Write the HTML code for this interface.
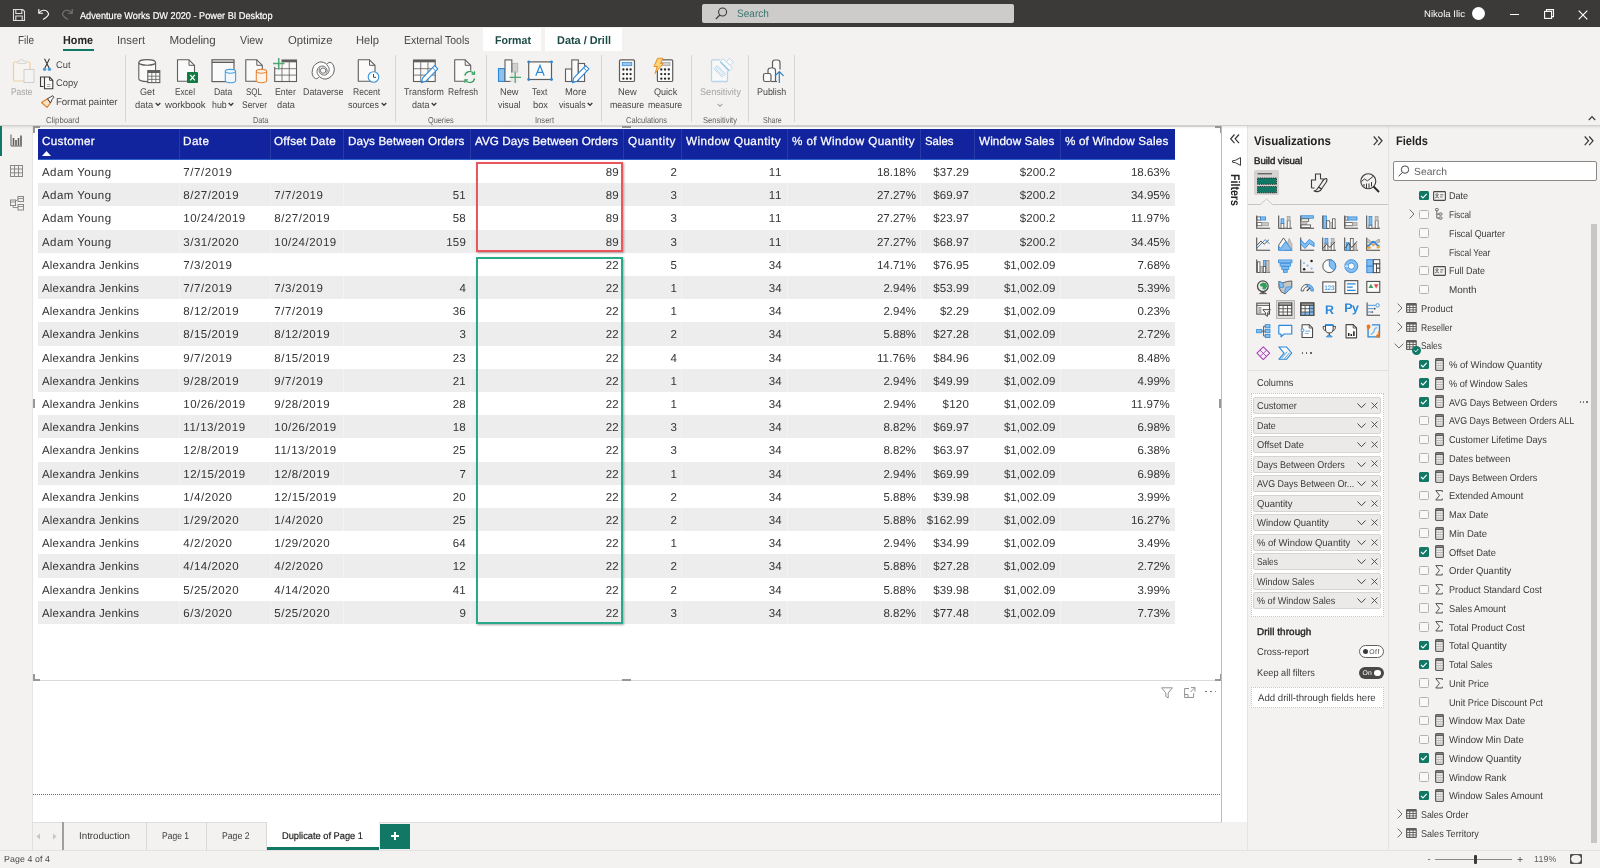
<!DOCTYPE html>
<html lang="en"><head><meta charset="utf-8"><title>Adventure Works DW 2020 - Power BI Desktop</title>
<style>
html,body{margin:0;padding:0;}
body{width:1600px;height:868px;overflow:hidden;position:relative;background:#f3f2f1;font-family:"Liberation Sans",sans-serif;text-rendering:geometricPrecision;}
.b{position:absolute;box-sizing:border-box;display:block;}
.t{position:absolute;white-space:pre;display:block;transform-origin:0 50%;}
svg{overflow:visible;}
</style></head><body>
<div id="root" style="position:absolute;left:0;top:0;width:1600px;height:868px;will-change:transform;">

<!-- p_chrome -->
<div class="b" style="left:0px;top:0px;width:1600px;height:27px;background:#3b3a39;"></div>
<svg class="b" style="left:13px;top:8.5px;" width="12" height="12" viewBox="0 0 12 12"><path d="M0.5 0.5h9.2l1.8 1.8v9.2h-11z M2.8 0.5v4h6v-4 M2.8 11.5v-4.5h6.4v4.5" fill="none" stroke="#e1dfdd" stroke-width="1.1"/></svg>
<svg class="b" style="left:38px;top:8px;" width="12" height="12" viewBox="0 0 12 12"><path d="M0.8 1v4.2h4.2 M1 5c2-3.2 6.5-3.6 8.6-1.2c2 2.4 0.6 5.2-4.6 7.6" fill="none" stroke="#fff" stroke-width="1.1"/></svg>
<svg class="b" style="left:61px;top:8px;" width="12" height="12" viewBox="0 0 12 12"><path d="M11.2 1v4.2h-4.2 M11 5c-2-3.2-6.5-3.6-8.600-1.200c-2 2.4-0.600 5.200 4.600 7.600" fill="none" stroke="#7a7876" stroke-width="1.1"/></svg>
<span class="t" style="left:80.00px;top:11px;font-size:9.9px;line-height:11px;color:#fff;transform:scaleX(0.9288);-webkit-text-stroke:0.2px #fff;">Adventure Works DW 2020 - Power BI Desktop</span>
<div class="b" style="left:702px;top:4px;width:312px;height:19px;background:#cdcccb;border-radius:2px;"></div>
<svg class="b" style="left:715px;top:7px;" width="13" height="13" viewBox="0 0 13 13"><circle cx="7.6" cy="5" r="4" fill="none" stroke="#3b3a39" stroke-width="1.1"/><path d="M4.8 8 L0.8 12" stroke="#3b3a39" stroke-width="1.1"/></svg>
<span class="t" style="left:737.00px;top:8px;font-size:10.6px;line-height:12px;color:#3a766c;transform:scaleX(0.9527);">Search</span>
<span class="t" style="left:1424.00px;top:9px;font-size:9.5px;line-height:11px;color:#fff;letter-spacing:0.032px;">Nikola Ilic</span>
<div class="b" style="left:1472px;top:6.5px;width:13px;height:13px;background:#fff;border-radius:50%;"></div>
<div class="b" style="left:1510px;top:14px;width:9px;height:1.2px;background:#fff;"></div>
<svg class="b" style="left:1544px;top:9px;" width="10" height="10" viewBox="0 0 10 10"><rect x="0.6" y="2.4" width="7" height="7" fill="none" stroke="#fff" stroke-width="1.1"/><path d="M2.5 2.4v-1.8h7v7h-1.9" fill="none" stroke="#fff" stroke-width="1.1"/></svg>
<svg class="b" style="left:1578px;top:9.5px;" width="10" height="10" viewBox="0 0 10 10"><path d="M0.7 0.7l8.6 8.6M9.3 0.7l-8.6 8.6" stroke="#fff" stroke-width="1.2"/></svg>
<span class="t" style="left:18.00px;top:35px;font-size:11.6px;line-height:12px;color:#4a4846;transform:scaleX(0.8560);">File</span>
<span class="t" style="left:117.00px;top:35px;font-size:11.6px;line-height:12px;color:#4a4846;transform:scaleX(0.9651);">Insert</span>
<span class="t" style="left:169.50px;top:35px;font-size:11.6px;line-height:12px;color:#4a4846;letter-spacing:-0.135px;">Modeling</span>
<span class="t" style="left:240.00px;top:35px;font-size:11.6px;line-height:12px;color:#4a4846;transform:scaleX(0.9224);">View</span>
<span class="t" style="left:287.50px;top:35px;font-size:11.6px;line-height:12px;color:#4a4846;transform:scaleX(0.9723);">Optimize</span>
<span class="t" style="left:356.00px;top:35px;font-size:11.6px;line-height:12px;color:#4a4846;transform:scaleX(0.9640);">Help</span>
<span class="t" style="left:404.00px;top:35px;font-size:11.6px;line-height:12px;color:#4a4846;transform:scaleX(0.9016);">External Tools</span>
<span class="t" style="left:63.30px;top:35px;font-size:11.6px;line-height:12px;color:#252423;font-weight:bold;transform:scaleX(0.9308);">Home</span>
<div class="b" style="left:63px;top:49px;width:30.5px;height:2px;background:#117865;"></div>
<div class="b" style="left:482.5px;top:27.5px;width:58.5px;height:23px;background:#fff;"></div>
<div class="b" style="left:544.5px;top:27.5px;width:77.5px;height:23px;background:#fff;"></div>
<span class="t" style="left:494.50px;top:35px;font-size:11.2px;line-height:12px;color:#1b4a45;font-weight:bold;transform:scaleX(0.9484);">Format</span>
<span class="t" style="left:556.50px;top:35px;font-size:11.2px;line-height:12px;color:#1b4a45;font-weight:bold;transform:scaleX(0.9749);">Data / Drill</span>
<div class="b" style="left:125px;top:55px;width:1px;height:67px;background:#d8d6d4;"></div>
<div class="b" style="left:395px;top:55px;width:1px;height:67px;background:#d8d6d4;"></div>
<div class="b" style="left:485.8px;top:55px;width:1px;height:67px;background:#d8d6d4;"></div>
<div class="b" style="left:601px;top:55px;width:1px;height:67px;background:#d8d6d4;"></div>
<div class="b" style="left:690.5px;top:55px;width:1px;height:67px;background:#d8d6d4;"></div>
<div class="b" style="left:748.3px;top:55px;width:1px;height:67px;background:#d8d6d4;"></div>
<div class="b" style="left:794px;top:55px;width:1px;height:67px;background:#d8d6d4;"></div>
<div class="b" style="left:0px;top:125px;width:1600px;height:1px;background:#d2d0ce;"></div>
<svg class="b" style="left:1588px;top:115px;" width="8" height="6" viewBox="0 0 8 6"><path d="M0.8 5l3.2-3.4l3.2 3.400" fill="none" stroke="#3b3a39" stroke-width="1.2"/></svg>
<span class="t" style="left:45.85px;top:115px;font-size:8.6px;line-height:10px;color:#605e5c;transform:scaleX(0.9046);">Clipboard</span>
<span class="t" style="left:252.80px;top:115px;font-size:8.6px;line-height:10px;color:#605e5c;transform:scaleX(0.8477);">Data</span>
<span class="t" style="left:428.25px;top:115px;font-size:8.6px;line-height:10px;color:#605e5c;transform:scaleX(0.8534);">Queries</span>
<span class="t" style="left:534.80px;top:115px;font-size:8.6px;line-height:10px;color:#605e5c;transform:scaleX(0.8834);">Insert</span>
<span class="t" style="left:626.00px;top:115px;font-size:8.6px;line-height:10px;color:#605e5c;transform:scaleX(0.8752);">Calculations</span>
<span class="t" style="left:703.00px;top:115px;font-size:8.6px;line-height:10px;color:#605e5c;transform:scaleX(0.8782);">Sensitivity</span>
<span class="t" style="left:762.75px;top:115px;font-size:8.6px;line-height:10px;color:#605e5c;transform:scaleX(0.8148);">Share</span>
<span class="t" style="left:56.00px;top:60px;font-size:9.7px;line-height:11px;color:#4a4846;transform:scaleX(0.9606);">Cut</span>
<span class="t" style="left:56.00px;top:78px;font-size:9.7px;line-height:11px;color:#4a4846;transform:scaleX(0.9715);">Copy</span>
<span class="t" style="left:56.00px;top:97px;font-size:9.7px;line-height:11px;color:#4a4846;letter-spacing:-0.113px;">Format painter</span>
<span class="t" style="left:11.20px;top:87px;font-size:9.7px;line-height:11px;color:#a6a4a2;transform:scaleX(0.8668);">Paste</span>
<span class="t" style="left:139.95px;top:87px;font-size:9.7px;line-height:11px;color:#4a4846;transform:scaleX(0.9402);">Get</span>
<span class="t" style="left:134.90px;top:100px;font-size:9.7px;line-height:11px;color:#4a4846;transform:scaleX(0.9640);">data</span>
<svg class="b" style="left:154.5px;top:102.3px;" width="6" height="5" viewBox="0 0 6 5"><path d="M0.700 1l2.300 2.300l2.300-2.300" fill="none" stroke="#3b3a39" stroke-width="1.300"/></svg>
<span class="t" style="left:175.30px;top:87px;font-size:9.7px;line-height:11px;color:#4a4846;transform:scaleX(0.8432);">Excel</span>
<span class="t" style="left:165.05px;top:100px;font-size:9.7px;line-height:11px;color:#4a4846;letter-spacing:-0.127px;">workbook</span>
<span class="t" style="left:213.80px;top:87px;font-size:9.7px;line-height:11px;color:#4a4846;transform:scaleX(0.8980);">Data</span>
<span class="t" style="left:212.35px;top:100px;font-size:9.7px;line-height:11px;color:#4a4846;transform:scaleX(0.9083);">hub</span>
<svg class="b" style="left:228.45px;top:102.3px;" width="6" height="5" viewBox="0 0 6 5"><path d="M0.700 1l2.300 2.300l2.300-2.300" fill="none" stroke="#3b3a39" stroke-width="1.300"/></svg>
<span class="t" style="left:246.20px;top:87px;font-size:9.7px;line-height:11px;color:#4a4846;transform:scaleX(0.8243);">SQL</span>
<span class="t" style="left:241.70px;top:100px;font-size:9.7px;line-height:11px;color:#4a4846;transform:scaleX(0.8750);">Server</span>
<span class="t" style="left:275.20px;top:87px;font-size:9.7px;line-height:11px;color:#4a4846;transform:scaleX(0.8971);">Enter</span>
<span class="t" style="left:276.60px;top:100px;font-size:9.7px;line-height:11px;color:#4a4846;transform:scaleX(0.9534);">data</span>
<span class="t" style="left:302.95px;top:87px;font-size:9.7px;line-height:11px;color:#4a4846;transform:scaleX(0.9161);">Dataverse</span>
<span class="t" style="left:353.45px;top:87px;font-size:9.7px;line-height:11px;color:#4a4846;transform:scaleX(0.8882);">Recent</span>
<span class="t" style="left:348.30px;top:100px;font-size:9.7px;line-height:11px;color:#4a4846;transform:scaleX(0.9127);">sources</span>
<svg class="b" style="left:380.7px;top:102.3px;" width="6" height="5" viewBox="0 0 6 5"><path d="M0.700 1l2.300 2.300l2.300-2.300" fill="none" stroke="#3b3a39" stroke-width="1.300"/></svg>
<span class="t" style="left:404.00px;top:87px;font-size:9.7px;line-height:11px;color:#4a4846;transform:scaleX(0.9125);">Transform</span>
<span class="t" style="left:411.95px;top:100px;font-size:9.7px;line-height:11px;color:#4a4846;transform:scaleX(0.9269);">data</span>
<svg class="b" style="left:430.85px;top:102.3px;" width="6" height="5" viewBox="0 0 6 5"><path d="M0.700 1l2.300 2.300l2.300-2.300" fill="none" stroke="#3b3a39" stroke-width="1.300"/></svg>
<span class="t" style="left:448.00px;top:87px;font-size:9.7px;line-height:11px;color:#4a4846;transform:scaleX(0.8833);">Refresh</span>
<span class="t" style="left:499.50px;top:87px;font-size:9.7px;line-height:11px;color:#4a4846;transform:scaleX(0.9533);">New</span>
<span class="t" style="left:497.50px;top:100px;font-size:9.7px;line-height:11px;color:#4a4846;transform:scaleX(0.9073);">visual</span>
<span class="t" style="left:532.45px;top:87px;font-size:9.7px;line-height:11px;color:#4a4846;transform:scaleX(0.8601);">Text</span>
<span class="t" style="left:532.60px;top:100px;font-size:9.7px;line-height:11px;color:#4a4846;transform:scaleX(0.9591);">box</span>
<span class="t" style="left:564.80px;top:87px;font-size:9.7px;line-height:11px;color:#4a4846;transform:scaleX(0.9683);">More</span>
<span class="t" style="left:558.85px;top:100px;font-size:9.7px;line-height:11px;color:#4a4846;transform:scaleX(0.9005);">visuals</span>
<svg class="b" style="left:586.95px;top:102.3px;" width="6" height="5" viewBox="0 0 6 5"><path d="M0.700 1l2.300 2.300l2.300-2.300" fill="none" stroke="#3b3a39" stroke-width="1.300"/></svg>
<span class="t" style="left:618.15px;top:87px;font-size:9.7px;line-height:11px;color:#4a4846;transform:scaleX(0.9637);">New</span>
<span class="t" style="left:610.40px;top:100px;font-size:9.7px;line-height:11px;color:#4a4846;transform:scaleX(0.9062);">measure</span>
<span class="t" style="left:654.00px;top:87px;font-size:9.7px;line-height:11px;color:#4a4846;transform:scaleX(0.9357);">Quick</span>
<span class="t" style="left:648.45px;top:100px;font-size:9.7px;line-height:11px;color:#4a4846;transform:scaleX(0.9088);">measure</span>
<span class="t" style="left:757.45px;top:87px;font-size:9.7px;line-height:11px;color:#4a4846;transform:scaleX(0.9209);">Publish</span>
<span class="t" style="left:699.50px;top:87px;font-size:9.7px;line-height:11px;color:#a6a4a2;transform:scaleX(0.9390);">Sensitivity</span>
<svg class="b" style="left:717.2px;top:102.6px;" width="6" height="5" viewBox="0 0 6 5"><path d="M0.700 1l2.300 2.300l2.300-2.300" fill="none" stroke="#a6a4a2" stroke-width="1.100"/></svg>
<!-- p_table -->
<div class="b" style="left:32px;top:126px;width:1190px;height:696px;background:#fff;"></div>
<div class="b" style="left:32px;top:126px;width:1px;height:696px;background:#e6e5e4;"></div>
<div class="b" style="left:33px;top:126px;width:1188px;height:1px;background:#dcdbda;"></div>
<div class="b" style="left:33px;top:680px;width:1188px;height:1px;background:#dcdbda;"></div>
<div class="b" style="left:38px;top:129.3px;width:1136.6px;height:30.8px;background:#12239e;border-bottom:1.5px solid #2c62c9;"></div>
<div class="b" style="left:179px;top:129.3px;width:1px;height:29.8px;background:#2a39a8;"></div>
<div class="b" style="left:269.5px;top:129.3px;width:1px;height:29.8px;background:#2a39a8;"></div>
<div class="b" style="left:343px;top:129.3px;width:1px;height:29.8px;background:#2a39a8;"></div>
<div class="b" style="left:470px;top:129.3px;width:1px;height:29.8px;background:#2a39a8;"></div>
<div class="b" style="left:623px;top:129.3px;width:1px;height:29.8px;background:#2a39a8;"></div>
<div class="b" style="left:681px;top:129.3px;width:1px;height:29.8px;background:#2a39a8;"></div>
<div class="b" style="left:787px;top:129.3px;width:1px;height:29.8px;background:#2a39a8;"></div>
<div class="b" style="left:920px;top:129.3px;width:1px;height:29.8px;background:#2a39a8;"></div>
<div class="b" style="left:973.5px;top:129.3px;width:1px;height:29.8px;background:#2a39a8;"></div>
<div class="b" style="left:1060px;top:129.3px;width:1px;height:29.8px;background:#2a39a8;"></div>
<span class="t" style="left:42.00px;top:135px;font-size:11.7px;line-height:13px;color:#fff;letter-spacing:0.286px;-webkit-text-stroke:0.25px #fff;">Customer</span>
<span class="t" style="left:183.00px;top:135px;font-size:11.7px;line-height:13px;color:#fff;letter-spacing:0.446px;-webkit-text-stroke:0.25px #fff;">Date</span>
<span class="t" style="left:274.00px;top:135px;font-size:11.7px;line-height:13px;color:#fff;letter-spacing:0.276px;-webkit-text-stroke:0.25px #fff;">Offset Date</span>
<span class="t" style="left:348.00px;top:135px;font-size:11.7px;line-height:13px;color:#fff;letter-spacing:0.108px;-webkit-text-stroke:0.25px #fff;">Days Between Orders</span>
<span class="t" style="left:475.00px;top:135px;font-size:11.7px;line-height:13px;color:#fff;letter-spacing:0.063px;-webkit-text-stroke:0.25px #fff;">AVG Days Between Orders</span>
<span class="t" style="left:628.00px;top:135px;font-size:11.7px;line-height:13px;color:#fff;letter-spacing:0.553px;-webkit-text-stroke:0.25px #fff;">Quantity</span>
<span class="t" style="left:686.00px;top:135px;font-size:11.7px;line-height:13px;color:#fff;letter-spacing:0.438px;-webkit-text-stroke:0.25px #fff;">Window Quantity</span>
<span class="t" style="left:792.00px;top:135px;font-size:11.7px;line-height:13px;color:#fff;letter-spacing:0.395px;-webkit-text-stroke:0.25px #fff;">% of Window Quantity</span>
<span class="t" style="left:925.00px;top:135px;font-size:11.7px;line-height:13px;color:#fff;transform:scaleX(0.9738);-webkit-text-stroke:0.25px #fff;">Sales</span>
<span class="t" style="left:979.00px;top:135px;font-size:11.7px;line-height:13px;color:#fff;letter-spacing:0.114px;-webkit-text-stroke:0.25px #fff;">Window Sales</span>
<span class="t" style="left:1065.00px;top:135px;font-size:11.7px;line-height:13px;color:#fff;letter-spacing:0.159px;-webkit-text-stroke:0.25px #fff;">% of Window Sales</span>
<svg class="b" style="left:42px;top:150.5px;" width="9" height="5" viewBox="0 0 9 5"><path d="M0 5L4.5 0L9 5z" fill="#fff"/></svg>
<span class="t" style="left:42.00px;top:167px;font-size:11.5px;line-height:12px;color:#333;letter-spacing:0.427px;">Adam Young</span>
<span class="t" style="left:183.30px;top:167px;font-size:11.5px;line-height:12px;color:#333;letter-spacing:0.553px;">7/7/2019</span>
<span class="t" style="left:605.78px;top:167px;font-size:11.5px;line-height:12px;color:#333;letter-spacing:0.212px;">89</span>
<span class="t" style="left:670.39px;top:167px;font-size:11.5px;line-height:12px;color:#333;letter-spacing:0.212px;">2</span>
<span class="t" style="left:768.78px;top:167px;font-size:11.5px;line-height:12px;color:#333;letter-spacing:0.639px;">11</span>
<span class="t" style="left:876.88px;top:167px;font-size:11.5px;line-height:12px;color:#333;letter-spacing:0.020px;">18.18%</span>
<span class="t" style="left:933.30px;top:167px;font-size:11.5px;line-height:12px;color:#333;letter-spacing:0.088px;">$37.29</span>
<span class="t" style="left:1019.80px;top:167px;font-size:11.5px;line-height:12px;color:#333;letter-spacing:0.088px;">$200.2</span>
<span class="t" style="left:1130.88px;top:167px;font-size:11.5px;line-height:12px;color:#333;letter-spacing:0.020px;">18.63%</span>
<div class="b" style="left:38px;top:183.2px;width:1136.6px;height:23.2px;background:#ededed;"></div>
<span class="t" style="left:42.00px;top:190px;font-size:11.5px;line-height:12px;color:#333;letter-spacing:0.427px;">Adam Young</span>
<span class="t" style="left:183.30px;top:190px;font-size:11.5px;line-height:12px;color:#333;letter-spacing:0.515px;">8/27/2019</span>
<span class="t" style="left:274.30px;top:190px;font-size:11.5px;line-height:12px;color:#333;letter-spacing:0.553px;">7/7/2019</span>
<span class="t" style="left:452.78px;top:190px;font-size:11.5px;line-height:12px;color:#333;letter-spacing:0.212px;">51</span>
<span class="t" style="left:605.78px;top:190px;font-size:11.5px;line-height:12px;color:#333;letter-spacing:0.212px;">89</span>
<span class="t" style="left:670.39px;top:190px;font-size:11.5px;line-height:12px;color:#333;letter-spacing:0.212px;">3</span>
<span class="t" style="left:768.78px;top:190px;font-size:11.5px;line-height:12px;color:#333;letter-spacing:0.639px;">11</span>
<span class="t" style="left:876.88px;top:190px;font-size:11.5px;line-height:12px;color:#333;letter-spacing:0.020px;">27.27%</span>
<span class="t" style="left:933.30px;top:190px;font-size:11.5px;line-height:12px;color:#333;letter-spacing:0.088px;">$69.97</span>
<span class="t" style="left:1019.80px;top:190px;font-size:11.5px;line-height:12px;color:#333;letter-spacing:0.088px;">$200.2</span>
<span class="t" style="left:1130.88px;top:190px;font-size:11.5px;line-height:12px;color:#333;letter-spacing:0.020px;">34.95%</span>
<span class="t" style="left:42.00px;top:213px;font-size:11.5px;line-height:12px;color:#333;letter-spacing:0.427px;">Adam Young</span>
<span class="t" style="left:183.30px;top:213px;font-size:11.5px;line-height:12px;color:#333;letter-spacing:0.485px;">10/24/2019</span>
<span class="t" style="left:274.30px;top:213px;font-size:11.5px;line-height:12px;color:#333;letter-spacing:0.515px;">8/27/2019</span>
<span class="t" style="left:452.78px;top:213px;font-size:11.5px;line-height:12px;color:#333;letter-spacing:0.212px;">58</span>
<span class="t" style="left:605.78px;top:213px;font-size:11.5px;line-height:12px;color:#333;letter-spacing:0.212px;">89</span>
<span class="t" style="left:670.39px;top:213px;font-size:11.5px;line-height:12px;color:#333;letter-spacing:0.212px;">3</span>
<span class="t" style="left:768.78px;top:213px;font-size:11.5px;line-height:12px;color:#333;letter-spacing:0.639px;">11</span>
<span class="t" style="left:876.88px;top:213px;font-size:11.5px;line-height:12px;color:#333;letter-spacing:0.020px;">27.27%</span>
<span class="t" style="left:933.30px;top:213px;font-size:11.5px;line-height:12px;color:#333;letter-spacing:0.088px;">$23.97</span>
<span class="t" style="left:1019.80px;top:213px;font-size:11.5px;line-height:12px;color:#333;letter-spacing:0.088px;">$200.2</span>
<span class="t" style="left:1130.88px;top:213px;font-size:11.5px;line-height:12px;color:#333;letter-spacing:0.162px;">11.97%</span>
<div class="b" style="left:38px;top:229.6px;width:1136.6px;height:23.2px;background:#ededed;"></div>
<span class="t" style="left:42.00px;top:237px;font-size:11.5px;line-height:12px;color:#333;letter-spacing:0.427px;">Adam Young</span>
<span class="t" style="left:183.30px;top:237px;font-size:11.5px;line-height:12px;color:#333;letter-spacing:0.515px;">3/31/2020</span>
<span class="t" style="left:274.30px;top:237px;font-size:11.5px;line-height:12px;color:#333;letter-spacing:0.485px;">10/24/2019</span>
<span class="t" style="left:446.18px;top:237px;font-size:11.5px;line-height:12px;color:#333;letter-spacing:0.212px;">159</span>
<span class="t" style="left:605.78px;top:237px;font-size:11.5px;line-height:12px;color:#333;letter-spacing:0.212px;">89</span>
<span class="t" style="left:670.39px;top:237px;font-size:11.5px;line-height:12px;color:#333;letter-spacing:0.212px;">3</span>
<span class="t" style="left:768.78px;top:237px;font-size:11.5px;line-height:12px;color:#333;letter-spacing:0.639px;">11</span>
<span class="t" style="left:876.88px;top:237px;font-size:11.5px;line-height:12px;color:#333;letter-spacing:0.020px;">27.27%</span>
<span class="t" style="left:933.30px;top:237px;font-size:11.5px;line-height:12px;color:#333;letter-spacing:0.088px;">$68.97</span>
<span class="t" style="left:1019.80px;top:237px;font-size:11.5px;line-height:12px;color:#333;letter-spacing:0.088px;">$200.2</span>
<span class="t" style="left:1130.88px;top:237px;font-size:11.5px;line-height:12px;color:#333;letter-spacing:0.020px;">34.45%</span>
<span class="t" style="left:42.00px;top:260px;font-size:11.5px;line-height:12px;color:#333;letter-spacing:0.190px;">Alexandra Jenkins</span>
<span class="t" style="left:183.30px;top:260px;font-size:11.5px;line-height:12px;color:#333;letter-spacing:0.553px;">7/3/2019</span>
<span class="t" style="left:605.78px;top:260px;font-size:11.5px;line-height:12px;color:#333;letter-spacing:0.212px;">22</span>
<span class="t" style="left:670.39px;top:260px;font-size:11.5px;line-height:12px;color:#333;letter-spacing:0.212px;">5</span>
<span class="t" style="left:768.78px;top:260px;font-size:11.5px;line-height:12px;color:#333;letter-spacing:0.212px;">34</span>
<span class="t" style="left:876.88px;top:260px;font-size:11.5px;line-height:12px;color:#333;letter-spacing:0.020px;">14.71%</span>
<span class="t" style="left:933.30px;top:260px;font-size:11.5px;line-height:12px;color:#333;letter-spacing:0.088px;">$76.95</span>
<span class="t" style="left:1003.92px;top:260px;font-size:11.5px;line-height:12px;color:#333;letter-spacing:0.046px;">$1,002.09</span>
<span class="t" style="left:1137.49px;top:260px;font-size:11.5px;line-height:12px;color:#333;letter-spacing:-0.019px;">7.68%</span>
<div class="b" style="left:38px;top:276.0px;width:1136.6px;height:23.2px;background:#ededed;"></div>
<span class="t" style="left:42.00px;top:283px;font-size:11.5px;line-height:12px;color:#333;letter-spacing:0.190px;">Alexandra Jenkins</span>
<span class="t" style="left:183.30px;top:283px;font-size:11.5px;line-height:12px;color:#333;letter-spacing:0.553px;">7/7/2019</span>
<span class="t" style="left:274.30px;top:283px;font-size:11.5px;line-height:12px;color:#333;letter-spacing:0.553px;">7/3/2019</span>
<span class="t" style="left:459.39px;top:283px;font-size:11.5px;line-height:12px;color:#333;letter-spacing:0.212px;">4</span>
<span class="t" style="left:605.78px;top:283px;font-size:11.5px;line-height:12px;color:#333;letter-spacing:0.212px;">22</span>
<span class="t" style="left:670.39px;top:283px;font-size:11.5px;line-height:12px;color:#333;letter-spacing:0.212px;">1</span>
<span class="t" style="left:768.78px;top:283px;font-size:11.5px;line-height:12px;color:#333;letter-spacing:0.212px;">34</span>
<span class="t" style="left:883.49px;top:283px;font-size:11.5px;line-height:12px;color:#333;letter-spacing:-0.019px;">2.94%</span>
<span class="t" style="left:933.30px;top:283px;font-size:11.5px;line-height:12px;color:#333;letter-spacing:0.088px;">$53.99</span>
<span class="t" style="left:1003.92px;top:283px;font-size:11.5px;line-height:12px;color:#333;letter-spacing:0.046px;">$1,002.09</span>
<span class="t" style="left:1137.49px;top:283px;font-size:11.5px;line-height:12px;color:#333;letter-spacing:-0.019px;">5.39%</span>
<span class="t" style="left:42.00px;top:306px;font-size:11.5px;line-height:12px;color:#333;letter-spacing:0.190px;">Alexandra Jenkins</span>
<span class="t" style="left:183.30px;top:306px;font-size:11.5px;line-height:12px;color:#333;letter-spacing:0.515px;">8/12/2019</span>
<span class="t" style="left:274.30px;top:306px;font-size:11.5px;line-height:12px;color:#333;letter-spacing:0.553px;">7/7/2019</span>
<span class="t" style="left:452.78px;top:306px;font-size:11.5px;line-height:12px;color:#333;letter-spacing:0.212px;">36</span>
<span class="t" style="left:605.78px;top:306px;font-size:11.5px;line-height:12px;color:#333;letter-spacing:0.212px;">22</span>
<span class="t" style="left:670.39px;top:306px;font-size:11.5px;line-height:12px;color:#333;letter-spacing:0.212px;">1</span>
<span class="t" style="left:768.78px;top:306px;font-size:11.5px;line-height:12px;color:#333;letter-spacing:0.212px;">34</span>
<span class="t" style="left:883.49px;top:306px;font-size:11.5px;line-height:12px;color:#333;letter-spacing:-0.019px;">2.94%</span>
<span class="t" style="left:939.91px;top:306px;font-size:11.5px;line-height:12px;color:#333;letter-spacing:0.063px;">$2.29</span>
<span class="t" style="left:1003.92px;top:306px;font-size:11.5px;line-height:12px;color:#333;letter-spacing:0.046px;">$1,002.09</span>
<span class="t" style="left:1137.49px;top:306px;font-size:11.5px;line-height:12px;color:#333;letter-spacing:-0.019px;">0.23%</span>
<div class="b" style="left:38px;top:322.4px;width:1136.6px;height:23.2px;background:#ededed;"></div>
<span class="t" style="left:42.00px;top:329px;font-size:11.5px;line-height:12px;color:#333;letter-spacing:0.190px;">Alexandra Jenkins</span>
<span class="t" style="left:183.30px;top:329px;font-size:11.5px;line-height:12px;color:#333;letter-spacing:0.515px;">8/15/2019</span>
<span class="t" style="left:274.30px;top:329px;font-size:11.5px;line-height:12px;color:#333;letter-spacing:0.515px;">8/12/2019</span>
<span class="t" style="left:459.39px;top:329px;font-size:11.5px;line-height:12px;color:#333;letter-spacing:0.212px;">3</span>
<span class="t" style="left:605.78px;top:329px;font-size:11.5px;line-height:12px;color:#333;letter-spacing:0.212px;">22</span>
<span class="t" style="left:670.39px;top:329px;font-size:11.5px;line-height:12px;color:#333;letter-spacing:0.212px;">2</span>
<span class="t" style="left:768.78px;top:329px;font-size:11.5px;line-height:12px;color:#333;letter-spacing:0.212px;">34</span>
<span class="t" style="left:883.49px;top:329px;font-size:11.5px;line-height:12px;color:#333;letter-spacing:-0.019px;">5.88%</span>
<span class="t" style="left:933.30px;top:329px;font-size:11.5px;line-height:12px;color:#333;letter-spacing:0.088px;">$27.28</span>
<span class="t" style="left:1003.92px;top:329px;font-size:11.5px;line-height:12px;color:#333;letter-spacing:0.046px;">$1,002.09</span>
<span class="t" style="left:1137.49px;top:329px;font-size:11.5px;line-height:12px;color:#333;letter-spacing:-0.019px;">2.72%</span>
<span class="t" style="left:42.00px;top:353px;font-size:11.5px;line-height:12px;color:#333;letter-spacing:0.190px;">Alexandra Jenkins</span>
<span class="t" style="left:183.30px;top:353px;font-size:11.5px;line-height:12px;color:#333;letter-spacing:0.553px;">9/7/2019</span>
<span class="t" style="left:274.30px;top:353px;font-size:11.5px;line-height:12px;color:#333;letter-spacing:0.515px;">8/15/2019</span>
<span class="t" style="left:452.78px;top:353px;font-size:11.5px;line-height:12px;color:#333;letter-spacing:0.212px;">23</span>
<span class="t" style="left:605.78px;top:353px;font-size:11.5px;line-height:12px;color:#333;letter-spacing:0.212px;">22</span>
<span class="t" style="left:670.39px;top:353px;font-size:11.5px;line-height:12px;color:#333;letter-spacing:0.212px;">4</span>
<span class="t" style="left:768.78px;top:353px;font-size:11.5px;line-height:12px;color:#333;letter-spacing:0.212px;">34</span>
<span class="t" style="left:876.88px;top:353px;font-size:11.5px;line-height:12px;color:#333;letter-spacing:0.162px;">11.76%</span>
<span class="t" style="left:933.30px;top:353px;font-size:11.5px;line-height:12px;color:#333;letter-spacing:0.088px;">$84.96</span>
<span class="t" style="left:1003.92px;top:353px;font-size:11.5px;line-height:12px;color:#333;letter-spacing:0.046px;">$1,002.09</span>
<span class="t" style="left:1137.49px;top:353px;font-size:11.5px;line-height:12px;color:#333;letter-spacing:-0.019px;">8.48%</span>
<div class="b" style="left:38px;top:368.8px;width:1136.6px;height:23.2px;background:#ededed;"></div>
<span class="t" style="left:42.00px;top:376px;font-size:11.5px;line-height:12px;color:#333;letter-spacing:0.190px;">Alexandra Jenkins</span>
<span class="t" style="left:183.30px;top:376px;font-size:11.5px;line-height:12px;color:#333;letter-spacing:0.515px;">9/28/2019</span>
<span class="t" style="left:274.30px;top:376px;font-size:11.5px;line-height:12px;color:#333;letter-spacing:0.553px;">9/7/2019</span>
<span class="t" style="left:452.78px;top:376px;font-size:11.5px;line-height:12px;color:#333;letter-spacing:0.212px;">21</span>
<span class="t" style="left:605.78px;top:376px;font-size:11.5px;line-height:12px;color:#333;letter-spacing:0.212px;">22</span>
<span class="t" style="left:670.39px;top:376px;font-size:11.5px;line-height:12px;color:#333;letter-spacing:0.212px;">1</span>
<span class="t" style="left:768.78px;top:376px;font-size:11.5px;line-height:12px;color:#333;letter-spacing:0.212px;">34</span>
<span class="t" style="left:883.49px;top:376px;font-size:11.5px;line-height:12px;color:#333;letter-spacing:-0.019px;">2.94%</span>
<span class="t" style="left:933.30px;top:376px;font-size:11.5px;line-height:12px;color:#333;letter-spacing:0.088px;">$49.99</span>
<span class="t" style="left:1003.92px;top:376px;font-size:11.5px;line-height:12px;color:#333;letter-spacing:0.046px;">$1,002.09</span>
<span class="t" style="left:1137.49px;top:376px;font-size:11.5px;line-height:12px;color:#333;letter-spacing:-0.019px;">4.99%</span>
<span class="t" style="left:42.00px;top:399px;font-size:11.5px;line-height:12px;color:#333;letter-spacing:0.190px;">Alexandra Jenkins</span>
<span class="t" style="left:183.30px;top:399px;font-size:11.5px;line-height:12px;color:#333;letter-spacing:0.485px;">10/26/2019</span>
<span class="t" style="left:274.30px;top:399px;font-size:11.5px;line-height:12px;color:#333;letter-spacing:0.515px;">9/28/2019</span>
<span class="t" style="left:452.78px;top:399px;font-size:11.5px;line-height:12px;color:#333;letter-spacing:0.212px;">28</span>
<span class="t" style="left:605.78px;top:399px;font-size:11.5px;line-height:12px;color:#333;letter-spacing:0.212px;">22</span>
<span class="t" style="left:670.39px;top:399px;font-size:11.5px;line-height:12px;color:#333;letter-spacing:0.212px;">1</span>
<span class="t" style="left:768.78px;top:399px;font-size:11.5px;line-height:12px;color:#333;letter-spacing:0.212px;">34</span>
<span class="t" style="left:883.49px;top:399px;font-size:11.5px;line-height:12px;color:#333;letter-spacing:-0.019px;">2.94%</span>
<span class="t" style="left:942.57px;top:399px;font-size:11.5px;line-height:12px;color:#333;letter-spacing:0.212px;">$120</span>
<span class="t" style="left:1003.92px;top:399px;font-size:11.5px;line-height:12px;color:#333;letter-spacing:0.046px;">$1,002.09</span>
<span class="t" style="left:1130.88px;top:399px;font-size:11.5px;line-height:12px;color:#333;letter-spacing:0.162px;">11.97%</span>
<div class="b" style="left:38px;top:415.2px;width:1136.6px;height:23.2px;background:#ededed;"></div>
<span class="t" style="left:42.00px;top:422px;font-size:11.5px;line-height:12px;color:#333;letter-spacing:0.190px;">Alexandra Jenkins</span>
<span class="t" style="left:183.30px;top:422px;font-size:11.5px;line-height:12px;color:#333;letter-spacing:0.570px;">11/13/2019</span>
<span class="t" style="left:274.30px;top:422px;font-size:11.5px;line-height:12px;color:#333;letter-spacing:0.485px;">10/26/2019</span>
<span class="t" style="left:452.78px;top:422px;font-size:11.5px;line-height:12px;color:#333;letter-spacing:0.212px;">18</span>
<span class="t" style="left:605.78px;top:422px;font-size:11.5px;line-height:12px;color:#333;letter-spacing:0.212px;">22</span>
<span class="t" style="left:670.39px;top:422px;font-size:11.5px;line-height:12px;color:#333;letter-spacing:0.212px;">3</span>
<span class="t" style="left:768.78px;top:422px;font-size:11.5px;line-height:12px;color:#333;letter-spacing:0.212px;">34</span>
<span class="t" style="left:883.49px;top:422px;font-size:11.5px;line-height:12px;color:#333;letter-spacing:-0.019px;">8.82%</span>
<span class="t" style="left:933.30px;top:422px;font-size:11.5px;line-height:12px;color:#333;letter-spacing:0.088px;">$69.97</span>
<span class="t" style="left:1003.92px;top:422px;font-size:11.5px;line-height:12px;color:#333;letter-spacing:0.046px;">$1,002.09</span>
<span class="t" style="left:1137.49px;top:422px;font-size:11.5px;line-height:12px;color:#333;letter-spacing:-0.019px;">6.98%</span>
<span class="t" style="left:42.00px;top:445px;font-size:11.5px;line-height:12px;color:#333;letter-spacing:0.190px;">Alexandra Jenkins</span>
<span class="t" style="left:183.30px;top:445px;font-size:11.5px;line-height:12px;color:#333;letter-spacing:0.515px;">12/8/2019</span>
<span class="t" style="left:274.30px;top:445px;font-size:11.5px;line-height:12px;color:#333;letter-spacing:0.570px;">11/13/2019</span>
<span class="t" style="left:452.78px;top:445px;font-size:11.5px;line-height:12px;color:#333;letter-spacing:0.212px;">25</span>
<span class="t" style="left:605.78px;top:445px;font-size:11.5px;line-height:12px;color:#333;letter-spacing:0.212px;">22</span>
<span class="t" style="left:670.39px;top:445px;font-size:11.5px;line-height:12px;color:#333;letter-spacing:0.212px;">3</span>
<span class="t" style="left:768.78px;top:445px;font-size:11.5px;line-height:12px;color:#333;letter-spacing:0.212px;">34</span>
<span class="t" style="left:883.49px;top:445px;font-size:11.5px;line-height:12px;color:#333;letter-spacing:-0.019px;">8.82%</span>
<span class="t" style="left:933.30px;top:445px;font-size:11.5px;line-height:12px;color:#333;letter-spacing:0.088px;">$63.97</span>
<span class="t" style="left:1003.92px;top:445px;font-size:11.5px;line-height:12px;color:#333;letter-spacing:0.046px;">$1,002.09</span>
<span class="t" style="left:1137.49px;top:445px;font-size:11.5px;line-height:12px;color:#333;letter-spacing:-0.019px;">6.38%</span>
<div class="b" style="left:38px;top:461.6px;width:1136.6px;height:23.2px;background:#ededed;"></div>
<span class="t" style="left:42.00px;top:469px;font-size:11.5px;line-height:12px;color:#333;letter-spacing:0.190px;">Alexandra Jenkins</span>
<span class="t" style="left:183.30px;top:469px;font-size:11.5px;line-height:12px;color:#333;letter-spacing:0.485px;">12/15/2019</span>
<span class="t" style="left:274.30px;top:469px;font-size:11.5px;line-height:12px;color:#333;letter-spacing:0.515px;">12/8/2019</span>
<span class="t" style="left:459.39px;top:469px;font-size:11.5px;line-height:12px;color:#333;letter-spacing:0.212px;">7</span>
<span class="t" style="left:605.78px;top:469px;font-size:11.5px;line-height:12px;color:#333;letter-spacing:0.212px;">22</span>
<span class="t" style="left:670.39px;top:469px;font-size:11.5px;line-height:12px;color:#333;letter-spacing:0.212px;">1</span>
<span class="t" style="left:768.78px;top:469px;font-size:11.5px;line-height:12px;color:#333;letter-spacing:0.212px;">34</span>
<span class="t" style="left:883.49px;top:469px;font-size:11.5px;line-height:12px;color:#333;letter-spacing:-0.019px;">2.94%</span>
<span class="t" style="left:933.30px;top:469px;font-size:11.5px;line-height:12px;color:#333;letter-spacing:0.088px;">$69.99</span>
<span class="t" style="left:1003.92px;top:469px;font-size:11.5px;line-height:12px;color:#333;letter-spacing:0.046px;">$1,002.09</span>
<span class="t" style="left:1137.49px;top:469px;font-size:11.5px;line-height:12px;color:#333;letter-spacing:-0.019px;">6.98%</span>
<span class="t" style="left:42.00px;top:492px;font-size:11.5px;line-height:12px;color:#333;letter-spacing:0.190px;">Alexandra Jenkins</span>
<span class="t" style="left:183.30px;top:492px;font-size:11.5px;line-height:12px;color:#333;letter-spacing:0.553px;">1/4/2020</span>
<span class="t" style="left:274.30px;top:492px;font-size:11.5px;line-height:12px;color:#333;letter-spacing:0.485px;">12/15/2019</span>
<span class="t" style="left:452.78px;top:492px;font-size:11.5px;line-height:12px;color:#333;letter-spacing:0.212px;">20</span>
<span class="t" style="left:605.78px;top:492px;font-size:11.5px;line-height:12px;color:#333;letter-spacing:0.212px;">22</span>
<span class="t" style="left:670.39px;top:492px;font-size:11.5px;line-height:12px;color:#333;letter-spacing:0.212px;">2</span>
<span class="t" style="left:768.78px;top:492px;font-size:11.5px;line-height:12px;color:#333;letter-spacing:0.212px;">34</span>
<span class="t" style="left:883.49px;top:492px;font-size:11.5px;line-height:12px;color:#333;letter-spacing:-0.019px;">5.88%</span>
<span class="t" style="left:933.30px;top:492px;font-size:11.5px;line-height:12px;color:#333;letter-spacing:0.088px;">$39.98</span>
<span class="t" style="left:1003.92px;top:492px;font-size:11.5px;line-height:12px;color:#333;letter-spacing:0.046px;">$1,002.09</span>
<span class="t" style="left:1137.49px;top:492px;font-size:11.5px;line-height:12px;color:#333;letter-spacing:-0.019px;">3.99%</span>
<div class="b" style="left:38px;top:508.0px;width:1136.6px;height:23.2px;background:#ededed;"></div>
<span class="t" style="left:42.00px;top:515px;font-size:11.5px;line-height:12px;color:#333;letter-spacing:0.190px;">Alexandra Jenkins</span>
<span class="t" style="left:183.30px;top:515px;font-size:11.5px;line-height:12px;color:#333;letter-spacing:0.515px;">1/29/2020</span>
<span class="t" style="left:274.30px;top:515px;font-size:11.5px;line-height:12px;color:#333;letter-spacing:0.553px;">1/4/2020</span>
<span class="t" style="left:452.78px;top:515px;font-size:11.5px;line-height:12px;color:#333;letter-spacing:0.212px;">25</span>
<span class="t" style="left:605.78px;top:515px;font-size:11.5px;line-height:12px;color:#333;letter-spacing:0.212px;">22</span>
<span class="t" style="left:670.39px;top:515px;font-size:11.5px;line-height:12px;color:#333;letter-spacing:0.212px;">2</span>
<span class="t" style="left:768.78px;top:515px;font-size:11.5px;line-height:12px;color:#333;letter-spacing:0.212px;">34</span>
<span class="t" style="left:883.49px;top:515px;font-size:11.5px;line-height:12px;color:#333;letter-spacing:-0.019px;">5.88%</span>
<span class="t" style="left:926.69px;top:515px;font-size:11.5px;line-height:12px;color:#333;letter-spacing:0.106px;">$162.99</span>
<span class="t" style="left:1003.92px;top:515px;font-size:11.5px;line-height:12px;color:#333;letter-spacing:0.046px;">$1,002.09</span>
<span class="t" style="left:1130.88px;top:515px;font-size:11.5px;line-height:12px;color:#333;letter-spacing:0.020px;">16.27%</span>
<span class="t" style="left:42.00px;top:538px;font-size:11.5px;line-height:12px;color:#333;letter-spacing:0.190px;">Alexandra Jenkins</span>
<span class="t" style="left:183.30px;top:538px;font-size:11.5px;line-height:12px;color:#333;letter-spacing:0.553px;">4/2/2020</span>
<span class="t" style="left:274.30px;top:538px;font-size:11.5px;line-height:12px;color:#333;letter-spacing:0.515px;">1/29/2020</span>
<span class="t" style="left:452.78px;top:538px;font-size:11.5px;line-height:12px;color:#333;letter-spacing:0.212px;">64</span>
<span class="t" style="left:605.78px;top:538px;font-size:11.5px;line-height:12px;color:#333;letter-spacing:0.212px;">22</span>
<span class="t" style="left:670.39px;top:538px;font-size:11.5px;line-height:12px;color:#333;letter-spacing:0.212px;">1</span>
<span class="t" style="left:768.78px;top:538px;font-size:11.5px;line-height:12px;color:#333;letter-spacing:0.212px;">34</span>
<span class="t" style="left:883.49px;top:538px;font-size:11.5px;line-height:12px;color:#333;letter-spacing:-0.019px;">2.94%</span>
<span class="t" style="left:933.30px;top:538px;font-size:11.5px;line-height:12px;color:#333;letter-spacing:0.088px;">$34.99</span>
<span class="t" style="left:1003.92px;top:538px;font-size:11.5px;line-height:12px;color:#333;letter-spacing:0.046px;">$1,002.09</span>
<span class="t" style="left:1137.49px;top:538px;font-size:11.5px;line-height:12px;color:#333;letter-spacing:-0.019px;">3.49%</span>
<div class="b" style="left:38px;top:554.4px;width:1136.6px;height:23.2px;background:#ededed;"></div>
<span class="t" style="left:42.00px;top:561px;font-size:11.5px;line-height:12px;color:#333;letter-spacing:0.190px;">Alexandra Jenkins</span>
<span class="t" style="left:183.30px;top:561px;font-size:11.5px;line-height:12px;color:#333;letter-spacing:0.515px;">4/14/2020</span>
<span class="t" style="left:274.30px;top:561px;font-size:11.5px;line-height:12px;color:#333;letter-spacing:0.553px;">4/2/2020</span>
<span class="t" style="left:452.78px;top:561px;font-size:11.5px;line-height:12px;color:#333;letter-spacing:0.212px;">12</span>
<span class="t" style="left:605.78px;top:561px;font-size:11.5px;line-height:12px;color:#333;letter-spacing:0.212px;">22</span>
<span class="t" style="left:670.39px;top:561px;font-size:11.5px;line-height:12px;color:#333;letter-spacing:0.212px;">2</span>
<span class="t" style="left:768.78px;top:561px;font-size:11.5px;line-height:12px;color:#333;letter-spacing:0.212px;">34</span>
<span class="t" style="left:883.49px;top:561px;font-size:11.5px;line-height:12px;color:#333;letter-spacing:-0.019px;">5.88%</span>
<span class="t" style="left:933.30px;top:561px;font-size:11.5px;line-height:12px;color:#333;letter-spacing:0.088px;">$27.28</span>
<span class="t" style="left:1003.92px;top:561px;font-size:11.5px;line-height:12px;color:#333;letter-spacing:0.046px;">$1,002.09</span>
<span class="t" style="left:1137.49px;top:561px;font-size:11.5px;line-height:12px;color:#333;letter-spacing:-0.019px;">2.72%</span>
<span class="t" style="left:42.00px;top:585px;font-size:11.5px;line-height:12px;color:#333;letter-spacing:0.190px;">Alexandra Jenkins</span>
<span class="t" style="left:183.30px;top:585px;font-size:11.5px;line-height:12px;color:#333;letter-spacing:0.515px;">5/25/2020</span>
<span class="t" style="left:274.30px;top:585px;font-size:11.5px;line-height:12px;color:#333;letter-spacing:0.515px;">4/14/2020</span>
<span class="t" style="left:452.78px;top:585px;font-size:11.5px;line-height:12px;color:#333;letter-spacing:0.212px;">41</span>
<span class="t" style="left:605.78px;top:585px;font-size:11.5px;line-height:12px;color:#333;letter-spacing:0.212px;">22</span>
<span class="t" style="left:670.39px;top:585px;font-size:11.5px;line-height:12px;color:#333;letter-spacing:0.212px;">2</span>
<span class="t" style="left:768.78px;top:585px;font-size:11.5px;line-height:12px;color:#333;letter-spacing:0.212px;">34</span>
<span class="t" style="left:883.49px;top:585px;font-size:11.5px;line-height:12px;color:#333;letter-spacing:-0.019px;">5.88%</span>
<span class="t" style="left:933.30px;top:585px;font-size:11.5px;line-height:12px;color:#333;letter-spacing:0.088px;">$39.98</span>
<span class="t" style="left:1003.92px;top:585px;font-size:11.5px;line-height:12px;color:#333;letter-spacing:0.046px;">$1,002.09</span>
<span class="t" style="left:1137.49px;top:585px;font-size:11.5px;line-height:12px;color:#333;letter-spacing:-0.019px;">3.99%</span>
<div class="b" style="left:38px;top:600.8px;width:1136.6px;height:23.2px;background:#ededed;"></div>
<span class="t" style="left:42.00px;top:608px;font-size:11.5px;line-height:12px;color:#333;letter-spacing:0.190px;">Alexandra Jenkins</span>
<span class="t" style="left:183.30px;top:608px;font-size:11.5px;line-height:12px;color:#333;letter-spacing:0.553px;">6/3/2020</span>
<span class="t" style="left:274.30px;top:608px;font-size:11.5px;line-height:12px;color:#333;letter-spacing:0.515px;">5/25/2020</span>
<span class="t" style="left:459.39px;top:608px;font-size:11.5px;line-height:12px;color:#333;letter-spacing:0.212px;">9</span>
<span class="t" style="left:605.78px;top:608px;font-size:11.5px;line-height:12px;color:#333;letter-spacing:0.212px;">22</span>
<span class="t" style="left:670.39px;top:608px;font-size:11.5px;line-height:12px;color:#333;letter-spacing:0.212px;">3</span>
<span class="t" style="left:768.78px;top:608px;font-size:11.5px;line-height:12px;color:#333;letter-spacing:0.212px;">34</span>
<span class="t" style="left:883.49px;top:608px;font-size:11.5px;line-height:12px;color:#333;letter-spacing:-0.019px;">8.82%</span>
<span class="t" style="left:933.30px;top:608px;font-size:11.5px;line-height:12px;color:#333;letter-spacing:0.088px;">$77.48</span>
<span class="t" style="left:1003.92px;top:608px;font-size:11.5px;line-height:12px;color:#333;letter-spacing:0.046px;">$1,002.09</span>
<span class="t" style="left:1137.49px;top:608px;font-size:11.5px;line-height:12px;color:#333;letter-spacing:-0.019px;">7.73%</span>
<div class="b" style="left:179px;top:160px;width:1px;height:464.0px;background:rgba(255,255,255,0.35);"></div>
<div class="b" style="left:269.5px;top:160px;width:1px;height:464.0px;background:rgba(255,255,255,0.35);"></div>
<div class="b" style="left:343px;top:160px;width:1px;height:464.0px;background:rgba(255,255,255,0.35);"></div>
<div class="b" style="left:470px;top:160px;width:1px;height:464.0px;background:rgba(255,255,255,0.35);"></div>
<div class="b" style="left:623px;top:160px;width:1px;height:464.0px;background:rgba(255,255,255,0.35);"></div>
<div class="b" style="left:681px;top:160px;width:1px;height:464.0px;background:rgba(255,255,255,0.35);"></div>
<div class="b" style="left:787px;top:160px;width:1px;height:464.0px;background:rgba(255,255,255,0.35);"></div>
<div class="b" style="left:920px;top:160px;width:1px;height:464.0px;background:rgba(255,255,255,0.35);"></div>
<div class="b" style="left:973.5px;top:160px;width:1px;height:464.0px;background:rgba(255,255,255,0.35);"></div>
<div class="b" style="left:1060px;top:160px;width:1px;height:464.0px;background:rgba(255,255,255,0.35);"></div>
<div class="b" style="left:476px;top:162px;width:147px;height:89.5px;border:2px solid #e9565b;box-shadow:0.5px 1px 2px rgba(0,0,0,0.35);"></div>
<div class="b" style="left:476px;top:257px;width:147px;height:367px;border:2px solid #2aa88a;box-shadow:0.5px 1px 2px rgba(0,0,0,0.35);"></div>
<div class="b" style="left:33px;top:125.8px;width:7px;height:2px;background:#9a9896;"></div>
<div class="b" style="left:33px;top:125.8px;width:2px;height:7px;background:#9a9896;"></div>
<div class="b" style="left:1214.5px;top:125.8px;width:7px;height:2px;background:#9a9896;"></div>
<div class="b" style="left:1219.5px;top:125.8px;width:2px;height:7px;background:#9a9896;"></div>
<div class="b" style="left:33px;top:679.3px;width:7px;height:2px;background:#9a9896;"></div>
<div class="b" style="left:33px;top:674.3px;width:2px;height:7px;background:#9a9896;"></div>
<div class="b" style="left:1214.5px;top:679.3px;width:7px;height:2px;background:#9a9896;"></div>
<div class="b" style="left:1219.5px;top:674.3px;width:2px;height:7px;background:#9a9896;"></div>
<div class="b" style="left:622px;top:125.5px;width:9px;height:2px;background:#9a9896;"></div>
<div class="b" style="left:622px;top:679.3px;width:9px;height:2px;background:#9a9896;"></div>
<div class="b" style="left:32.5px;top:399px;width:2px;height:9px;background:#9a9896;"></div>
<div class="b" style="left:1218.5px;top:399px;width:2px;height:9px;background:#9a9896;"></div>
<div class="b" style="left:33px;top:793.5px;width:1187px;height:1px;border-top:1px dotted #6b6967;"></div>
<svg class="b" style="left:1161px;top:686.5px;" width="12" height="12" viewBox="0 0 12 12"><path d="M0.6 0.8h10.8l-4.200 5.200v5l-2.400-1.600v-3.400z" fill="none" stroke="#8a8886" stroke-width="0.9"/></svg>
<svg class="b" style="left:1183.5px;top:686.5px;" width="12" height="11" viewBox="0 0 12 11"><path d="M5 1.500h-4.400v9h9v-4.400 M4 7.500h-3.400 M4 7.500v3 M7 0.600h4v4 M11 0.600l-4.500 4.500" fill="none" stroke="#8a8886" stroke-width="0.9"/></svg>
<div class="b" style="left:1205.3px;top:690.5px;width:1.7px;height:1.7px;background:#605e5c;border-radius:50%;"></div>
<div class="b" style="left:1210.05px;top:690.5px;width:1.7px;height:1.7px;background:#605e5c;border-radius:50%;"></div>
<div class="b" style="left:1214.8px;top:690.5px;width:1.7px;height:1.7px;background:#605e5c;border-radius:50%;"></div>
<!-- p_nav -->
<div class="b" style="left:0px;top:125.5px;width:2px;height:30.5px;background:#117865;"></div>
<svg class="b" style="left:10px;top:134px;" width="13" height="13" viewBox="0 0 13 13"><path d="M1 0.500v11.500h11" fill="none" stroke="#605e5c" stroke-width="1"/><path d="M3.500 4v7.500M6 6v5.500M8.500 4v7.500M11 1.500v10" stroke="#605e5c" stroke-width="1.600"/></svg>
<svg class="b" style="left:10px;top:165px;" width="13" height="12" viewBox="0 0 13 12"><rect x="0.500" y="0.500" width="12" height="11" fill="none" stroke="#8a8886" stroke-width="1"/><path d="M0.500 4h12M0.500 7.800h12M4.500 0.500v11M8.500 0.500v11" stroke="#8a8886" stroke-width="1"/></svg>
<svg class="b" style="left:9.5px;top:195.5px;" width="14" height="15" viewBox="0 0 14 15"><rect x="0.500" y="4" width="5" height="5.500" fill="none" stroke="#8a8886" stroke-width="1"/><rect x="8" y="0.500" width="5.500" height="5" fill="none" stroke="#8a8886" stroke-width="1"/><rect x="8" y="8.500" width="5.500" height="5.500" fill="none" stroke="#8a8886" stroke-width="1"/><path d="M0.500 6h5M8 2.500h5.500M8 10.500h5.500M5.500 5.500l2.500-2.500M3 9.500v2h5" fill="none" stroke="#8a8886" stroke-width="0.900"/></svg>
<!-- p_viz -->
<div class="b" style="left:1222px;top:126px;width:25.5px;height:696px;background:#fff;"></div>
<div class="b" style="left:1222px;top:822px;width:25.5px;height:27.5px;background:#f3f2f1;"></div>
<div class="b" style="left:1220.8px;top:126px;width:1px;height:696px;background:#bdbbb9;"></div>
<div class="b" style="left:1247px;top:126px;width:1px;height:723.5px;background:#e6e4e2;"></div>
<div class="b" style="left:1388px;top:126px;width:1px;height:723.5px;background:#e6e4e2;"></div>
<div class="b" style="left:0px;top:126px;width:1600px;height:2.5px;background:linear-gradient(rgba(120,118,116,0.16),rgba(120,118,116,0));"></div>
<svg class="b" style="left:1229.8px;top:133.6px;" width="10" height="10" viewBox="0 0 10 10"><path d="M4.500 0.500L0.700 4.800L4.500 9.100M9 0.500L5.200 4.800L9 9.100" fill="none" stroke="#3b3a39" stroke-width="1.250"/></svg>
<svg class="b" style="left:1372.5px;top:135.5px;" width="10" height="10" viewBox="0 0 10 10"><path d="M0.700 0.500L4.500 4.800L0.700 9.100M5.200 0.500L9 4.800L5.200 9.100" fill="none" stroke="#3b3a39" stroke-width="1.250"/></svg>
<svg class="b" style="left:1583.5px;top:135.5px;" width="10" height="10" viewBox="0 0 10 10"><path d="M0.700 0.500L4.500 4.800L0.700 9.100M5.200 0.500L9 4.800L5.200 9.100" fill="none" stroke="#3b3a39" stroke-width="1.250"/></svg>
<svg class="b" style="left:1232px;top:157px;" width="9" height="9" viewBox="0 0 9 9"><path d="M8.500 0.600v7.800l-5-2.700l-3-0.500v-1.400l3-0.500z" fill="none" stroke="#3b3a39" stroke-width="1"/></svg>
<span class="t" style="left:1229px;top:173.500px;font-size:12.500px;line-height:12px;font-weight:bold;color:#252423;writing-mode:vertical-rl;transform-origin:0 0;transform:scaleY(0.850);">Filters</span>
<span class="t" style="left:1254.00px;top:134px;font-size:12.4px;line-height:14px;color:#252423;font-weight:bold;transform:scaleX(0.9337);">Visualizations</span>
<span class="t" style="left:1396.00px;top:134px;font-size:12.4px;line-height:14px;color:#252423;font-weight:bold;transform:scaleX(0.8931);">Fields</span>
<span class="t" style="left:1254.00px;top:156px;font-size:9.7px;line-height:11px;color:#252423;letter-spacing:-0.064px;-webkit-text-stroke:0.4px #252423;">Build visual</span>
<div class="b" style="left:1254px;top:170.3px;width:24.5px;height:24.5px;background:#d5d3d1;border-radius:2px;"></div>
<svg class="b" style="left:1247.5px;top:198px;" width="141" height="8" viewBox="0 0 141 8"><path d="M0 6.500h12.500l6-5.500l6 5.500h116" fill="none" stroke="#c8c6c4" stroke-width="1"/></svg>
<div class="b" style="left:1275.5px;top:300.3px;width:19px;height:19px;background:#dddbd9;border:1px solid #b8b6b4;"></div>
<div class="b" style="left:1248px;top:370px;width:140px;height:1px;background:#e1dfdd;"></div>
<span class="t" style="left:1257.00px;top:378px;font-size:9.9px;line-height:11px;color:#3b3a39;transform:scaleX(0.9343);">Columns</span>
<div class="b" style="left:1251px;top:393.4px;width:132.5px;height:224px;background:#fff;border:1px dotted #c8c6c4;"></div>
<div class="b" style="left:1253px;top:397.1px;width:127.6px;height:17px;background:#ebeae9;border:1px solid #d6d4d2;border-radius:2px;"></div>
<span class="t" style="left:1257.00px;top:401px;font-size:9.9px;line-height:11px;color:#3b3a39;transform:scaleX(0.9321);">Customer</span>
<svg class="b" style="left:1356.8px;top:403.0px;" width="9" height="6" viewBox="0 0 9 6"><path d="M0.500 0.500l4 4.200l4-4.200" fill="none" stroke="#4a4846" stroke-width="1"/></svg>
<svg class="b" style="left:1370.8px;top:401.9px;" width="7" height="7" viewBox="0 0 7 7"><path d="M0.500 0.500l6 6M6.500 0.500l-6 6" fill="none" stroke="#4a4846" stroke-width="0.900"/></svg>
<div class="b" style="left:1253px;top:416.62px;width:127.6px;height:17px;background:#ebeae9;border:1px solid #d6d4d2;border-radius:2px;"></div>
<span class="t" style="left:1257.00px;top:421px;font-size:9.9px;line-height:11px;color:#3b3a39;transform:scaleX(0.8990);">Date</span>
<svg class="b" style="left:1356.8px;top:422.52px;" width="9" height="6" viewBox="0 0 9 6"><path d="M0.500 0.500l4 4.200l4-4.200" fill="none" stroke="#4a4846" stroke-width="1"/></svg>
<svg class="b" style="left:1370.8px;top:421.42px;" width="7" height="7" viewBox="0 0 7 7"><path d="M0.500 0.500l6 6M6.500 0.500l-6 6" fill="none" stroke="#4a4846" stroke-width="0.900"/></svg>
<div class="b" style="left:1253px;top:436.14px;width:127.6px;height:17px;background:#ebeae9;border:1px solid #d6d4d2;border-radius:2px;"></div>
<span class="t" style="left:1257.00px;top:440px;font-size:9.9px;line-height:11px;color:#3b3a39;transform:scaleX(0.9420);">Offset Date</span>
<svg class="b" style="left:1356.8px;top:442.04px;" width="9" height="6" viewBox="0 0 9 6"><path d="M0.500 0.500l4 4.200l4-4.200" fill="none" stroke="#4a4846" stroke-width="1"/></svg>
<svg class="b" style="left:1370.8px;top:440.94px;" width="7" height="7" viewBox="0 0 7 7"><path d="M0.500 0.500l6 6M6.500 0.500l-6 6" fill="none" stroke="#4a4846" stroke-width="0.900"/></svg>
<div class="b" style="left:1253px;top:455.66px;width:127.6px;height:17px;background:#ebeae9;border:1px solid #d6d4d2;border-radius:2px;"></div>
<span class="t" style="left:1257.00px;top:460px;font-size:9.9px;line-height:11px;color:#3b3a39;transform:scaleX(0.9087);">Days Between Orders</span>
<svg class="b" style="left:1356.8px;top:461.56px;" width="9" height="6" viewBox="0 0 9 6"><path d="M0.500 0.500l4 4.200l4-4.200" fill="none" stroke="#4a4846" stroke-width="1"/></svg>
<svg class="b" style="left:1370.8px;top:460.46px;" width="7" height="7" viewBox="0 0 7 7"><path d="M0.500 0.500l6 6M6.500 0.500l-6 6" fill="none" stroke="#4a4846" stroke-width="0.900"/></svg>
<div class="b" style="left:1253px;top:475.18px;width:127.6px;height:17px;background:#ebeae9;border:1px solid #d6d4d2;border-radius:2px;"></div>
<span class="t" style="left:1257.00px;top:479px;font-size:9.9px;line-height:11px;color:#3b3a39;transform:scaleX(0.9010);">AVG Days Between Or...</span>
<svg class="b" style="left:1356.8px;top:481.08px;" width="9" height="6" viewBox="0 0 9 6"><path d="M0.500 0.500l4 4.200l4-4.200" fill="none" stroke="#4a4846" stroke-width="1"/></svg>
<svg class="b" style="left:1370.8px;top:479.98px;" width="7" height="7" viewBox="0 0 7 7"><path d="M0.500 0.500l6 6M6.500 0.500l-6 6" fill="none" stroke="#4a4846" stroke-width="0.900"/></svg>
<div class="b" style="left:1253px;top:494.7px;width:127.6px;height:17px;background:#ebeae9;border:1px solid #d6d4d2;border-radius:2px;"></div>
<span class="t" style="left:1257.00px;top:499px;font-size:9.9px;line-height:11px;color:#3b3a39;transform:scaleX(0.9629);">Quantity</span>
<svg class="b" style="left:1356.8px;top:500.6px;" width="9" height="6" viewBox="0 0 9 6"><path d="M0.500 0.500l4 4.200l4-4.200" fill="none" stroke="#4a4846" stroke-width="1"/></svg>
<svg class="b" style="left:1370.8px;top:499.5px;" width="7" height="7" viewBox="0 0 7 7"><path d="M0.500 0.500l6 6M6.500 0.500l-6 6" fill="none" stroke="#4a4846" stroke-width="0.900"/></svg>
<div class="b" style="left:1253px;top:514.22px;width:127.6px;height:17px;background:#ebeae9;border:1px solid #d6d4d2;border-radius:2px;"></div>
<span class="t" style="left:1257.00px;top:518px;font-size:9.9px;line-height:11px;color:#3b3a39;transform:scaleX(0.9622);">Window Quantity</span>
<svg class="b" style="left:1356.8px;top:520.12px;" width="9" height="6" viewBox="0 0 9 6"><path d="M0.500 0.500l4 4.200l4-4.200" fill="none" stroke="#4a4846" stroke-width="1"/></svg>
<svg class="b" style="left:1370.8px;top:519.02px;" width="7" height="7" viewBox="0 0 7 7"><path d="M0.500 0.500l6 6M6.500 0.500l-6 6" fill="none" stroke="#4a4846" stroke-width="0.900"/></svg>
<div class="b" style="left:1253px;top:533.74px;width:127.6px;height:17px;background:#ebeae9;border:1px solid #d6d4d2;border-radius:2px;"></div>
<span class="t" style="left:1257.00px;top:538px;font-size:9.9px;line-height:11px;color:#3b3a39;transform:scaleX(0.9601);">% of Window Quantity</span>
<svg class="b" style="left:1356.8px;top:539.64px;" width="9" height="6" viewBox="0 0 9 6"><path d="M0.500 0.500l4 4.200l4-4.200" fill="none" stroke="#4a4846" stroke-width="1"/></svg>
<svg class="b" style="left:1370.8px;top:538.54px;" width="7" height="7" viewBox="0 0 7 7"><path d="M0.500 0.500l6 6M6.500 0.500l-6 6" fill="none" stroke="#4a4846" stroke-width="0.900"/></svg>
<div class="b" style="left:1253px;top:553.26px;width:127.6px;height:17px;background:#ebeae9;border:1px solid #d6d4d2;border-radius:2px;"></div>
<span class="t" style="left:1257.00px;top:557px;font-size:9.9px;line-height:11px;color:#3b3a39;transform:scaleX(0.8480);">Sales</span>
<svg class="b" style="left:1356.8px;top:559.16px;" width="9" height="6" viewBox="0 0 9 6"><path d="M0.500 0.500l4 4.200l4-4.200" fill="none" stroke="#4a4846" stroke-width="1"/></svg>
<svg class="b" style="left:1370.8px;top:558.06px;" width="7" height="7" viewBox="0 0 7 7"><path d="M0.500 0.500l6 6M6.500 0.500l-6 6" fill="none" stroke="#4a4846" stroke-width="0.900"/></svg>
<div class="b" style="left:1253px;top:572.78px;width:127.6px;height:17px;background:#ebeae9;border:1px solid #d6d4d2;border-radius:2px;"></div>
<span class="t" style="left:1257.00px;top:577px;font-size:9.9px;line-height:11px;color:#3b3a39;transform:scaleX(0.9167);">Window Sales</span>
<svg class="b" style="left:1356.8px;top:578.68px;" width="9" height="6" viewBox="0 0 9 6"><path d="M0.500 0.500l4 4.200l4-4.200" fill="none" stroke="#4a4846" stroke-width="1"/></svg>
<svg class="b" style="left:1370.8px;top:577.58px;" width="7" height="7" viewBox="0 0 7 7"><path d="M0.500 0.500l6 6M6.500 0.500l-6 6" fill="none" stroke="#4a4846" stroke-width="0.900"/></svg>
<div class="b" style="left:1253px;top:592.3px;width:127.6px;height:17px;background:#ebeae9;border:1px solid #d6d4d2;border-radius:2px;"></div>
<span class="t" style="left:1257.00px;top:596px;font-size:9.9px;line-height:11px;color:#3b3a39;transform:scaleX(0.9204);">% of Window Sales</span>
<svg class="b" style="left:1356.8px;top:598.2px;" width="9" height="6" viewBox="0 0 9 6"><path d="M0.500 0.500l4 4.200l4-4.200" fill="none" stroke="#4a4846" stroke-width="1"/></svg>
<svg class="b" style="left:1370.8px;top:597.1px;" width="7" height="7" viewBox="0 0 7 7"><path d="M0.500 0.500l6 6M6.500 0.500l-6 6" fill="none" stroke="#4a4846" stroke-width="0.900"/></svg>
<span class="t" style="left:1257.00px;top:627px;font-size:9.9px;line-height:11px;color:#252423;letter-spacing:0.087px;-webkit-text-stroke:0.4px #252423;">Drill through</span>
<span class="t" style="left:1257.00px;top:647px;font-size:9.9px;line-height:11px;color:#3b3a39;transform:scaleX(0.9452);">Cross-report</span>
<span class="t" style="left:1257.00px;top:668px;font-size:9.9px;line-height:11px;color:#3b3a39;transform:scaleX(0.9328);">Keep all filters</span>
<div class="b" style="left:1359px;top:645px;width:25px;height:12.5px;background:#fff;border:1px solid #605e5c;border-radius:7px;"></div>
<div class="b" style="left:1362.5px;top:648.5px;width:5.5px;height:5.5px;background:#3b3a39;border-radius:50%;"></div>
<span class="t" style="left:1369.30px;top:649px;font-size:6.8px;line-height:7px;color:#4a4846;letter-spacing:0.518px;">Off</span>
<div class="b" style="left:1359px;top:666.5px;width:25px;height:12.5px;background:#4a4846;border-radius:7px;"></div>
<div class="b" style="left:1374px;top:669.5px;width:6.5px;height:6.5px;background:#fff;border-radius:50%;"></div>
<span class="t" style="left:1362.50px;top:670px;font-size:6.8px;line-height:7px;color:#fff;letter-spacing:0.214px;">On</span>
<div class="b" style="left:1251px;top:687.4px;width:132.5px;height:20.3px;background:#fff;border:1px dotted #c8c6c4;"></div>
<span class="t" style="left:1258.00px;top:693px;font-size:9.9px;line-height:11px;color:#3b3a39;transform:scaleX(0.9746);">Add drill-through fields here</span>
<!-- p_fields -->
<div class="b" style="left:1392.5px;top:160.5px;width:204.5px;height:20.5px;background:#fff;border:1px solid #8a8886;border-radius:2px;"></div>
<svg class="b" style="left:1398px;top:165px;" width="12" height="12" viewBox="0 0 12 12"><circle cx="7" cy="4.600" r="3.700" fill="none" stroke="#4a4846" stroke-width="1"/><path d="M4.400 7.400L0.700 11.300" stroke="#4a4846" stroke-width="1"/></svg>
<span class="t" style="left:1414.00px;top:167px;font-size:10.3px;line-height:11px;color:#605e5c;letter-spacing:0.061px;">Search</span>
<div class="b" style="left:1591px;top:224px;width:6px;height:618.5px;background:#c8c6c4;"></div>
<div class="b" style="left:1419.3px;top:190.9px;width:9.6px;height:9.6px;background:#117865;border-radius:1.500px;"></div><svg class="b" style="left:1419.3px;top:190.9px;" width="9.6" height="9.6" viewBox="0 0 9.6 9.6"><path d="M2 5l2 2l3.700-4" fill="none" stroke="#fff" stroke-width="1.100"/></svg>
<svg class="b" style="left:1433px;top:190.7px;" width="13" height="10" viewBox="0 0 13 10"><rect x="0.600" y="0.600" width="11.800" height="8.800" rx="0.800" fill="none" stroke="#4a4846" stroke-width="1.100"/><circle cx="4" cy="3.800" r="1.100" fill="none" stroke="#4a4846" stroke-width="0.800"/><path d="M2.200 7.200c0.300-1.800 3.300-1.800 3.600 0M7.200 3.800h3.200M7.200 6h2.200" fill="none" stroke="#4a4846" stroke-width="0.800"/></svg>
<span class="t" style="left:1449.00px;top:191px;font-size:9.9px;line-height:11px;color:#3b3a39;transform:scaleX(0.9181);">Date</span>
<div class="b" style="left:1419.3px;top:209.65px;width:9.6px;height:9.6px;background:#f8f8f7;border:1px solid #b5b3b1;border-radius:1.500px;"></div>
<svg class="b" style="left:1435px;top:207.95px;" width="8" height="12" viewBox="0 0 8 12"><rect x="0.500" y="0.500" width="2.800" height="2.200" rx="0.800" fill="none" stroke="#4a4846" stroke-width="0.800"/><rect x="4" y="5" width="3" height="2.200" rx="0.800" fill="none" stroke="#4a4846" stroke-width="0.800"/><rect x="4" y="9" width="3" height="2.200" rx="0.800" fill="none" stroke="#4a4846" stroke-width="0.800"/><path d="M1.800 2.700v7.400h2.200M1.800 6.100h2.200" fill="none" stroke="#4a4846" stroke-width="0.800"/></svg>
<svg class="b" style="left:1409px;top:209.45px;" width="6" height="10" viewBox="0 0 6 10"><path d="M0.700 0.600l4.300 4.400l-4.300 4.400" fill="none" stroke="#605e5c" stroke-width="0.900"/></svg>
<span class="t" style="left:1449.00px;top:210px;font-size:9.9px;line-height:11px;color:#3b3a39;transform:scaleX(0.8510);">Fiscal</span>
<div class="b" style="left:1419.3px;top:228.4px;width:9.6px;height:9.6px;background:#f8f8f7;border:1px solid #b5b3b1;border-radius:1.500px;"></div>
<span class="t" style="left:1449.00px;top:229px;font-size:9.9px;line-height:11px;color:#3b3a39;transform:scaleX(0.9008);">Fiscal Quarter</span>
<div class="b" style="left:1419.3px;top:247.15px;width:9.6px;height:9.6px;background:#f8f8f7;border:1px solid #b5b3b1;border-radius:1.500px;"></div>
<span class="t" style="left:1449.00px;top:248px;font-size:9.9px;line-height:11px;color:#3b3a39;transform:scaleX(0.8569);">Fiscal Year</span>
<div class="b" style="left:1419.3px;top:265.9px;width:9.6px;height:9.6px;background:#f8f8f7;border:1px solid #b5b3b1;border-radius:1.500px;"></div>
<svg class="b" style="left:1433px;top:265.7px;" width="13" height="10" viewBox="0 0 13 10"><rect x="0.600" y="0.600" width="11.800" height="8.800" rx="0.800" fill="none" stroke="#4a4846" stroke-width="1.100"/><circle cx="4" cy="3.800" r="1.100" fill="none" stroke="#4a4846" stroke-width="0.800"/><path d="M2.200 7.200c0.300-1.800 3.300-1.800 3.600 0M7.200 3.800h3.200M7.200 6h2.200" fill="none" stroke="#4a4846" stroke-width="0.800"/></svg>
<span class="t" style="left:1449.00px;top:266px;font-size:9.9px;line-height:11px;color:#3b3a39;transform:scaleX(0.9087);">Full Date</span>
<div class="b" style="left:1419.3px;top:284.65px;width:9.6px;height:9.6px;background:#f8f8f7;border:1px solid #b5b3b1;border-radius:1.500px;"></div>
<span class="t" style="left:1449.00px;top:285px;font-size:9.9px;line-height:11px;color:#3b3a39;">Month</span>
<svg class="b" style="left:1397px;top:303.2px;" width="6" height="10" viewBox="0 0 6 10"><path d="M0.700 0.600l4.300 4.400l-4.300 4.400" fill="none" stroke="#605e5c" stroke-width="0.900"/></svg>
<svg class="b" style="left:1406.1px;top:302.9px;" width="11" height="10" viewBox="0 0 11 10"><rect x="0.600" y="0.600" width="9.600" height="8.800" rx="0.500" fill="#fbfbfb" stroke="#605e5c" stroke-width="1.200"/><path d="M0.600 1.800h9.600" stroke="#605e5c" stroke-width="1.600"/><path d="M0.600 4.500h9.600M0.600 6.900h9.600M3.700 2v7.400M7.100 2v7.400" stroke="#605e5c" stroke-width="0.950"/></svg>
<span class="t" style="left:1421.40px;top:304px;font-size:9.9px;line-height:11px;color:#3b3a39;transform:scaleX(0.9379);">Product</span>
<svg class="b" style="left:1397px;top:321.95px;" width="6" height="10" viewBox="0 0 6 10"><path d="M0.700 0.600l4.300 4.400l-4.300 4.400" fill="none" stroke="#605e5c" stroke-width="0.900"/></svg>
<svg class="b" style="left:1406.1px;top:321.65px;" width="11" height="10" viewBox="0 0 11 10"><rect x="0.600" y="0.600" width="9.600" height="8.800" rx="0.500" fill="#fbfbfb" stroke="#605e5c" stroke-width="1.200"/><path d="M0.600 1.800h9.600" stroke="#605e5c" stroke-width="1.600"/><path d="M0.600 4.500h9.600M0.600 6.900h9.600M3.700 2v7.400M7.100 2v7.400" stroke="#605e5c" stroke-width="0.950"/></svg>
<span class="t" style="left:1421.40px;top:323px;font-size:9.9px;line-height:11px;color:#3b3a39;transform:scaleX(0.8674);">Reseller</span>
<svg class="b" style="left:1394.4px;top:343.1px;" width="10" height="6" viewBox="0 0 10 6"><path d="M0.600 0.700l4.400 4.300l4.400-4.300" fill="none" stroke="#605e5c" stroke-width="0.900"/></svg>
<svg class="b" style="left:1406.1px;top:340.4px;" width="11" height="10" viewBox="0 0 11 10"><rect x="0.600" y="0.600" width="9.600" height="8.800" rx="0.500" fill="#fbfbfb" stroke="#605e5c" stroke-width="1.200"/><path d="M0.600 1.800h9.600" stroke="#605e5c" stroke-width="1.600"/><path d="M0.600 4.500h9.600M0.600 6.900h9.600M3.700 2v7.400M7.100 2v7.400" stroke="#605e5c" stroke-width="0.950"/></svg>
<div class="b" style="left:1412px;top:345.5px;width:9px;height:9px;background:#117865;border-radius:50%;"></div>
<svg class="b" style="left:1412.2px;top:345.7px;" width="8.6" height="8.6" viewBox="0 0 8.6 8.6"><path d="M2.300 4.400l1.500 1.500l2.600-2.900" fill="none" stroke="#fff" stroke-width="0.900"/></svg>
<span class="t" style="left:1421.40px;top:341px;font-size:9.9px;line-height:11px;color:#3b3a39;transform:scaleX(0.8480);">Sales</span>
<div class="b" style="left:1419.3px;top:359.65px;width:9.6px;height:9.6px;background:#117865;border-radius:1.500px;"></div><svg class="b" style="left:1419.3px;top:359.65px;" width="9.6" height="9.6" viewBox="0 0 9.6 9.6"><path d="M2 5l2 2l3.700-4" fill="none" stroke="#fff" stroke-width="1.100"/></svg>
<svg class="b" style="left:1434.5px;top:357.84999999999997px;" width="9" height="13" viewBox="0 0 9 13"><rect x="0.650" y="0.650" width="7.700" height="11.700" rx="0.800" fill="#fbfbfb" stroke="#605e5c" stroke-width="1.300"/><path d="M0.650 2.200h7.700" stroke="#605e5c" stroke-width="1.800"/><path d="M1.300 5.200h6.400M1.300 7.600h6.400M1.300 10h6.400" stroke="#a19f9d" stroke-width="0.900"/><path d="M3.400 3.500v8M5.700 3.500v8" stroke="#c8c6c4" stroke-width="0.700"/></svg>
<span class="t" style="left:1449.00px;top:360px;font-size:9.9px;line-height:11px;color:#3b3a39;transform:scaleX(0.9601);">% of Window Quantity</span>
<div class="b" style="left:1419.3px;top:378.4px;width:9.6px;height:9.6px;background:#117865;border-radius:1.500px;"></div><svg class="b" style="left:1419.3px;top:378.4px;" width="9.6" height="9.6" viewBox="0 0 9.6 9.6"><path d="M2 5l2 2l3.700-4" fill="none" stroke="#fff" stroke-width="1.100"/></svg>
<svg class="b" style="left:1434.5px;top:376.59999999999997px;" width="9" height="13" viewBox="0 0 9 13"><rect x="0.650" y="0.650" width="7.700" height="11.700" rx="0.800" fill="#fbfbfb" stroke="#605e5c" stroke-width="1.300"/><path d="M0.650 2.200h7.700" stroke="#605e5c" stroke-width="1.800"/><path d="M1.300 5.200h6.400M1.300 7.600h6.400M1.300 10h6.400" stroke="#a19f9d" stroke-width="0.900"/><path d="M3.400 3.500v8M5.700 3.500v8" stroke="#c8c6c4" stroke-width="0.700"/></svg>
<span class="t" style="left:1449.00px;top:379px;font-size:9.9px;line-height:11px;color:#3b3a39;transform:scaleX(0.9239);">% of Window Sales</span>
<div class="b" style="left:1419.3px;top:397.15px;width:9.6px;height:9.6px;background:#117865;border-radius:1.500px;"></div><svg class="b" style="left:1419.3px;top:397.15px;" width="9.6" height="9.6" viewBox="0 0 9.6 9.6"><path d="M2 5l2 2l3.700-4" fill="none" stroke="#fff" stroke-width="1.100"/></svg>
<svg class="b" style="left:1434.5px;top:395.34999999999997px;" width="9" height="13" viewBox="0 0 9 13"><rect x="0.650" y="0.650" width="7.700" height="11.700" rx="0.800" fill="#fbfbfb" stroke="#605e5c" stroke-width="1.300"/><path d="M0.650 2.200h7.700" stroke="#605e5c" stroke-width="1.800"/><path d="M1.300 5.200h6.400M1.300 7.600h6.400M1.300 10h6.400" stroke="#a19f9d" stroke-width="0.900"/><path d="M3.400 3.500v8M5.700 3.500v8" stroke="#c8c6c4" stroke-width="0.700"/></svg>
<span class="t" style="left:1449.00px;top:398px;font-size:9.9px;line-height:11px;color:#3b3a39;transform:scaleX(0.9059);">AVG Days Between Orders</span>
<div class="b" style="left:1419.3px;top:415.9px;width:9.6px;height:9.6px;background:#f8f8f7;border:1px solid #b5b3b1;border-radius:1.500px;"></div>
<svg class="b" style="left:1434.5px;top:414.09999999999997px;" width="9" height="13" viewBox="0 0 9 13"><rect x="0.650" y="0.650" width="7.700" height="11.700" rx="0.800" fill="#fbfbfb" stroke="#605e5c" stroke-width="1.300"/><path d="M0.650 2.200h7.700" stroke="#605e5c" stroke-width="1.800"/><path d="M1.300 5.200h6.400M1.300 7.600h6.400M1.300 10h6.400" stroke="#a19f9d" stroke-width="0.900"/><path d="M3.400 3.500v8M5.700 3.500v8" stroke="#c8c6c4" stroke-width="0.700"/></svg>
<span class="t" style="left:1449.00px;top:416px;font-size:9.9px;line-height:11px;color:#3b3a39;transform:scaleX(0.8991);">AVG Days Between Orders ALL</span>
<div class="b" style="left:1419.3px;top:434.65px;width:9.6px;height:9.6px;background:#f8f8f7;border:1px solid #b5b3b1;border-radius:1.500px;"></div>
<svg class="b" style="left:1434.5px;top:432.84999999999997px;" width="9" height="13" viewBox="0 0 9 13"><rect x="0.650" y="0.650" width="7.700" height="11.700" rx="0.800" fill="#fbfbfb" stroke="#605e5c" stroke-width="1.300"/><path d="M0.650 2.200h7.700" stroke="#605e5c" stroke-width="1.800"/><path d="M1.300 5.200h6.400M1.300 7.600h6.400M1.300 10h6.400" stroke="#a19f9d" stroke-width="0.900"/><path d="M3.400 3.500v8M5.700 3.500v8" stroke="#c8c6c4" stroke-width="0.700"/></svg>
<span class="t" style="left:1449.00px;top:435px;font-size:9.9px;line-height:11px;color:#3b3a39;transform:scaleX(0.9277);">Customer Lifetime Days</span>
<div class="b" style="left:1419.3px;top:453.4px;width:9.6px;height:9.6px;background:#f8f8f7;border:1px solid #b5b3b1;border-radius:1.500px;"></div>
<svg class="b" style="left:1434.5px;top:451.59999999999997px;" width="9" height="13" viewBox="0 0 9 13"><rect x="0.650" y="0.650" width="7.700" height="11.700" rx="0.800" fill="#fbfbfb" stroke="#605e5c" stroke-width="1.300"/><path d="M0.650 2.200h7.700" stroke="#605e5c" stroke-width="1.800"/><path d="M1.300 5.200h6.400M1.300 7.600h6.400M1.300 10h6.400" stroke="#a19f9d" stroke-width="0.900"/><path d="M3.400 3.500v8M5.700 3.500v8" stroke="#c8c6c4" stroke-width="0.700"/></svg>
<span class="t" style="left:1449.00px;top:454px;font-size:9.9px;line-height:11px;color:#3b3a39;transform:scaleX(0.9312);">Dates between</span>
<div class="b" style="left:1419.3px;top:472.15px;width:9.6px;height:9.6px;background:#117865;border-radius:1.500px;"></div><svg class="b" style="left:1419.3px;top:472.15px;" width="9.6" height="9.6" viewBox="0 0 9.6 9.6"><path d="M2 5l2 2l3.700-4" fill="none" stroke="#fff" stroke-width="1.100"/></svg>
<svg class="b" style="left:1434.5px;top:470.34999999999997px;" width="9" height="13" viewBox="0 0 9 13"><rect x="0.650" y="0.650" width="7.700" height="11.700" rx="0.800" fill="#fbfbfb" stroke="#605e5c" stroke-width="1.300"/><path d="M0.650 2.200h7.700" stroke="#605e5c" stroke-width="1.800"/><path d="M1.300 5.200h6.400M1.300 7.600h6.400M1.300 10h6.400" stroke="#a19f9d" stroke-width="0.900"/><path d="M3.400 3.500v8M5.700 3.500v8" stroke="#c8c6c4" stroke-width="0.700"/></svg>
<span class="t" style="left:1449.00px;top:473px;font-size:9.9px;line-height:11px;color:#3b3a39;transform:scaleX(0.9139);">Days Between Orders</span>
<div class="b" style="left:1419.3px;top:490.9px;width:9.6px;height:9.6px;background:#f8f8f7;border:1px solid #b5b3b1;border-radius:1.500px;"></div>
<svg class="b" style="left:1435px;top:490.2px;" width="8" height="11" viewBox="0 0 8 11"><path d="M7.300 2v-1.400h-6.500l3.700 4.700l-3.700 4.700h6.500v-1.400" fill="none" stroke="#4a4846" stroke-width="0.950"/></svg>
<span class="t" style="left:1449.00px;top:491px;font-size:9.9px;line-height:11px;color:#3b3a39;transform:scaleX(0.9532);">Extended Amount</span>
<div class="b" style="left:1419.3px;top:509.65px;width:9.6px;height:9.6px;background:#f8f8f7;border:1px solid #b5b3b1;border-radius:1.500px;"></div>
<svg class="b" style="left:1434.5px;top:507.84999999999997px;" width="9" height="13" viewBox="0 0 9 13"><rect x="0.650" y="0.650" width="7.700" height="11.700" rx="0.800" fill="#fbfbfb" stroke="#605e5c" stroke-width="1.300"/><path d="M0.650 2.200h7.700" stroke="#605e5c" stroke-width="1.800"/><path d="M1.300 5.200h6.400M1.300 7.600h6.400M1.300 10h6.400" stroke="#a19f9d" stroke-width="0.900"/><path d="M3.400 3.500v8M5.700 3.500v8" stroke="#c8c6c4" stroke-width="0.700"/></svg>
<span class="t" style="left:1449.00px;top:510px;font-size:9.9px;line-height:11px;color:#3b3a39;transform:scaleX(0.9324);">Max Date</span>
<div class="b" style="left:1419.3px;top:528.4px;width:9.6px;height:9.6px;background:#f8f8f7;border:1px solid #b5b3b1;border-radius:1.500px;"></div>
<svg class="b" style="left:1434.5px;top:526.6px;" width="9" height="13" viewBox="0 0 9 13"><rect x="0.650" y="0.650" width="7.700" height="11.700" rx="0.800" fill="#fbfbfb" stroke="#605e5c" stroke-width="1.300"/><path d="M0.650 2.200h7.700" stroke="#605e5c" stroke-width="1.800"/><path d="M1.300 5.200h6.400M1.300 7.600h6.400M1.300 10h6.400" stroke="#a19f9d" stroke-width="0.900"/><path d="M3.400 3.500v8M5.700 3.500v8" stroke="#c8c6c4" stroke-width="0.700"/></svg>
<span class="t" style="left:1449.00px;top:529px;font-size:9.9px;line-height:11px;color:#3b3a39;transform:scaleX(0.9592);">Min Date</span>
<div class="b" style="left:1419.3px;top:547.15px;width:9.6px;height:9.6px;background:#117865;border-radius:1.500px;"></div><svg class="b" style="left:1419.3px;top:547.15px;" width="9.6" height="9.6" viewBox="0 0 9.6 9.6"><path d="M2 5l2 2l3.700-4" fill="none" stroke="#fff" stroke-width="1.100"/></svg>
<svg class="b" style="left:1434.5px;top:545.35px;" width="9" height="13" viewBox="0 0 9 13"><rect x="0.650" y="0.650" width="7.700" height="11.700" rx="0.800" fill="#fbfbfb" stroke="#605e5c" stroke-width="1.300"/><path d="M0.650 2.200h7.700" stroke="#605e5c" stroke-width="1.800"/><path d="M1.300 5.200h6.400M1.300 7.600h6.400M1.300 10h6.400" stroke="#a19f9d" stroke-width="0.900"/><path d="M3.400 3.500v8M5.700 3.500v8" stroke="#c8c6c4" stroke-width="0.700"/></svg>
<span class="t" style="left:1449.00px;top:548px;font-size:9.9px;line-height:11px;color:#3b3a39;transform:scaleX(0.9420);">Offset Date</span>
<div class="b" style="left:1419.3px;top:565.9px;width:9.6px;height:9.6px;background:#f8f8f7;border:1px solid #b5b3b1;border-radius:1.500px;"></div>
<svg class="b" style="left:1435px;top:565.2px;" width="8" height="11" viewBox="0 0 8 11"><path d="M7.300 2v-1.400h-6.500l3.700 4.700l-3.700 4.700h6.500v-1.400" fill="none" stroke="#4a4846" stroke-width="0.950"/></svg>
<span class="t" style="left:1449.00px;top:566px;font-size:9.9px;line-height:11px;color:#3b3a39;transform:scaleX(0.9626);">Order Quantity</span>
<div class="b" style="left:1419.3px;top:584.65px;width:9.6px;height:9.6px;background:#f8f8f7;border:1px solid #b5b3b1;border-radius:1.500px;"></div>
<svg class="b" style="left:1435px;top:583.95px;" width="8" height="11" viewBox="0 0 8 11"><path d="M7.300 2v-1.400h-6.500l3.700 4.700l-3.700 4.700h6.500v-1.400" fill="none" stroke="#4a4846" stroke-width="0.950"/></svg>
<span class="t" style="left:1449.00px;top:585px;font-size:9.9px;line-height:11px;color:#3b3a39;transform:scaleX(0.9285);">Product Standard Cost</span>
<div class="b" style="left:1419.3px;top:603.4px;width:9.6px;height:9.6px;background:#f8f8f7;border:1px solid #b5b3b1;border-radius:1.500px;"></div>
<svg class="b" style="left:1435px;top:602.7px;" width="8" height="11" viewBox="0 0 8 11"><path d="M7.300 2v-1.400h-6.500l3.700 4.700l-3.700 4.700h6.500v-1.400" fill="none" stroke="#4a4846" stroke-width="0.950"/></svg>
<span class="t" style="left:1449.00px;top:604px;font-size:9.9px;line-height:11px;color:#3b3a39;transform:scaleX(0.9331);">Sales Amount</span>
<div class="b" style="left:1419.3px;top:622.15px;width:9.6px;height:9.6px;background:#f8f8f7;border:1px solid #b5b3b1;border-radius:1.500px;"></div>
<svg class="b" style="left:1435px;top:621.45px;" width="8" height="11" viewBox="0 0 8 11"><path d="M7.300 2v-1.400h-6.500l3.700 4.700l-3.700 4.700h6.500v-1.400" fill="none" stroke="#4a4846" stroke-width="0.950"/></svg>
<span class="t" style="left:1449.00px;top:623px;font-size:9.9px;line-height:11px;color:#3b3a39;transform:scaleX(0.9396);">Total Product Cost</span>
<div class="b" style="left:1419.3px;top:640.9px;width:9.6px;height:9.6px;background:#117865;border-radius:1.500px;"></div><svg class="b" style="left:1419.3px;top:640.9px;" width="9.6" height="9.6" viewBox="0 0 9.6 9.6"><path d="M2 5l2 2l3.700-4" fill="none" stroke="#fff" stroke-width="1.100"/></svg>
<svg class="b" style="left:1434.5px;top:639.1px;" width="9" height="13" viewBox="0 0 9 13"><rect x="0.650" y="0.650" width="7.700" height="11.700" rx="0.800" fill="#fbfbfb" stroke="#605e5c" stroke-width="1.300"/><path d="M0.650 2.200h7.700" stroke="#605e5c" stroke-width="1.800"/><path d="M1.300 5.200h6.400M1.300 7.600h6.400M1.300 10h6.400" stroke="#a19f9d" stroke-width="0.900"/><path d="M3.400 3.500v8M5.700 3.500v8" stroke="#c8c6c4" stroke-width="0.700"/></svg>
<span class="t" style="left:1449.00px;top:641px;font-size:9.9px;line-height:11px;color:#3b3a39;transform:scaleX(0.9582);">Total Quantity</span>
<div class="b" style="left:1419.3px;top:659.65px;width:9.6px;height:9.6px;background:#117865;border-radius:1.500px;"></div><svg class="b" style="left:1419.3px;top:659.65px;" width="9.6" height="9.6" viewBox="0 0 9.6 9.6"><path d="M2 5l2 2l3.700-4" fill="none" stroke="#fff" stroke-width="1.100"/></svg>
<svg class="b" style="left:1434.5px;top:657.85px;" width="9" height="13" viewBox="0 0 9 13"><rect x="0.650" y="0.650" width="7.700" height="11.700" rx="0.800" fill="#fbfbfb" stroke="#605e5c" stroke-width="1.300"/><path d="M0.650 2.200h7.700" stroke="#605e5c" stroke-width="1.800"/><path d="M1.300 5.200h6.400M1.300 7.600h6.400M1.300 10h6.400" stroke="#a19f9d" stroke-width="0.900"/><path d="M3.400 3.500v8M5.700 3.500v8" stroke="#c8c6c4" stroke-width="0.700"/></svg>
<span class="t" style="left:1449.00px;top:660px;font-size:9.9px;line-height:11px;color:#3b3a39;transform:scaleX(0.8982);">Total Sales</span>
<div class="b" style="left:1419.3px;top:678.4px;width:9.6px;height:9.6px;background:#f8f8f7;border:1px solid #b5b3b1;border-radius:1.500px;"></div>
<svg class="b" style="left:1435px;top:677.7px;" width="8" height="11" viewBox="0 0 8 11"><path d="M7.300 2v-1.400h-6.500l3.700 4.700l-3.700 4.700h6.500v-1.400" fill="none" stroke="#4a4846" stroke-width="0.950"/></svg>
<span class="t" style="left:1449.00px;top:679px;font-size:9.9px;line-height:11px;color:#3b3a39;transform:scaleX(0.9321);">Unit Price</span>
<div class="b" style="left:1419.3px;top:697.15px;width:9.6px;height:9.6px;background:#f8f8f7;border:1px solid #b5b3b1;border-radius:1.500px;"></div>
<span class="t" style="left:1449.00px;top:698px;font-size:9.9px;line-height:11px;color:#3b3a39;transform:scaleX(0.9285);">Unit Price Discount Pct</span>
<div class="b" style="left:1419.3px;top:715.9px;width:9.6px;height:9.6px;background:#f8f8f7;border:1px solid #b5b3b1;border-radius:1.500px;"></div>
<svg class="b" style="left:1434.5px;top:714.1px;" width="9" height="13" viewBox="0 0 9 13"><rect x="0.650" y="0.650" width="7.700" height="11.700" rx="0.800" fill="#fbfbfb" stroke="#605e5c" stroke-width="1.300"/><path d="M0.650 2.200h7.700" stroke="#605e5c" stroke-width="1.800"/><path d="M1.300 5.200h6.400M1.300 7.600h6.400M1.300 10h6.400" stroke="#a19f9d" stroke-width="0.900"/><path d="M3.400 3.500v8M5.700 3.500v8" stroke="#c8c6c4" stroke-width="0.700"/></svg>
<span class="t" style="left:1449.00px;top:716px;font-size:9.9px;line-height:11px;color:#3b3a39;transform:scaleX(0.9523);">Window Max Date</span>
<div class="b" style="left:1419.3px;top:734.65px;width:9.6px;height:9.6px;background:#f8f8f7;border:1px solid #b5b3b1;border-radius:1.500px;"></div>
<svg class="b" style="left:1434.5px;top:732.85px;" width="9" height="13" viewBox="0 0 9 13"><rect x="0.650" y="0.650" width="7.700" height="11.700" rx="0.800" fill="#fbfbfb" stroke="#605e5c" stroke-width="1.300"/><path d="M0.650 2.200h7.700" stroke="#605e5c" stroke-width="1.800"/><path d="M1.300 5.200h6.400M1.300 7.600h6.400M1.300 10h6.400" stroke="#a19f9d" stroke-width="0.900"/><path d="M3.400 3.500v8M5.700 3.500v8" stroke="#c8c6c4" stroke-width="0.700"/></svg>
<span class="t" style="left:1449.00px;top:735px;font-size:9.9px;line-height:11px;color:#3b3a39;transform:scaleX(0.9668);">Window Min Date</span>
<div class="b" style="left:1419.3px;top:753.4px;width:9.6px;height:9.6px;background:#117865;border-radius:1.500px;"></div><svg class="b" style="left:1419.3px;top:753.4px;" width="9.6" height="9.6" viewBox="0 0 9.6 9.6"><path d="M2 5l2 2l3.700-4" fill="none" stroke="#fff" stroke-width="1.100"/></svg>
<svg class="b" style="left:1434.5px;top:751.6px;" width="9" height="13" viewBox="0 0 9 13"><rect x="0.650" y="0.650" width="7.700" height="11.700" rx="0.800" fill="#fbfbfb" stroke="#605e5c" stroke-width="1.300"/><path d="M0.650 2.200h7.700" stroke="#605e5c" stroke-width="1.800"/><path d="M1.300 5.200h6.400M1.300 7.600h6.400M1.300 10h6.400" stroke="#a19f9d" stroke-width="0.900"/><path d="M3.400 3.500v8M5.700 3.500v8" stroke="#c8c6c4" stroke-width="0.700"/></svg>
<span class="t" style="left:1449.00px;top:754px;font-size:9.9px;line-height:11px;color:#3b3a39;transform:scaleX(0.9689);">Window Quantity</span>
<div class="b" style="left:1419.3px;top:772.15px;width:9.6px;height:9.6px;background:#f8f8f7;border:1px solid #b5b3b1;border-radius:1.500px;"></div>
<svg class="b" style="left:1434.5px;top:770.35px;" width="9" height="13" viewBox="0 0 9 13"><rect x="0.650" y="0.650" width="7.700" height="11.700" rx="0.800" fill="#fbfbfb" stroke="#605e5c" stroke-width="1.300"/><path d="M0.650 2.200h7.700" stroke="#605e5c" stroke-width="1.800"/><path d="M1.300 5.200h6.400M1.300 7.600h6.400M1.300 10h6.400" stroke="#a19f9d" stroke-width="0.900"/><path d="M3.400 3.500v8M5.700 3.500v8" stroke="#c8c6c4" stroke-width="0.700"/></svg>
<span class="t" style="left:1449.00px;top:773px;font-size:9.9px;line-height:11px;color:#3b3a39;transform:scaleX(0.9415);">Window Rank</span>
<div class="b" style="left:1419.3px;top:790.9px;width:9.6px;height:9.6px;background:#117865;border-radius:1.500px;"></div><svg class="b" style="left:1419.3px;top:790.9px;" width="9.6" height="9.6" viewBox="0 0 9.6 9.6"><path d="M2 5l2 2l3.700-4" fill="none" stroke="#fff" stroke-width="1.100"/></svg>
<svg class="b" style="left:1434.5px;top:789.1px;" width="9" height="13" viewBox="0 0 9 13"><rect x="0.650" y="0.650" width="7.700" height="11.700" rx="0.800" fill="#fbfbfb" stroke="#605e5c" stroke-width="1.300"/><path d="M0.650 2.200h7.700" stroke="#605e5c" stroke-width="1.800"/><path d="M1.300 5.200h6.400M1.300 7.600h6.400M1.300 10h6.400" stroke="#a19f9d" stroke-width="0.900"/><path d="M3.400 3.500v8M5.700 3.500v8" stroke="#c8c6c4" stroke-width="0.700"/></svg>
<span class="t" style="left:1449.00px;top:791px;font-size:9.9px;line-height:11px;color:#3b3a39;transform:scaleX(0.9490);">Window Sales Amount</span>
<svg class="b" style="left:1397px;top:809.45px;" width="6" height="10" viewBox="0 0 6 10"><path d="M0.700 0.600l4.300 4.400l-4.300 4.400" fill="none" stroke="#605e5c" stroke-width="0.900"/></svg>
<svg class="b" style="left:1406.1px;top:809.1500000000001px;" width="11" height="10" viewBox="0 0 11 10"><rect x="0.600" y="0.600" width="9.600" height="8.800" rx="0.500" fill="#fbfbfb" stroke="#605e5c" stroke-width="1.200"/><path d="M0.600 1.800h9.600" stroke="#605e5c" stroke-width="1.600"/><path d="M0.600 4.500h9.600M0.600 6.900h9.600M3.700 2v7.400M7.100 2v7.400" stroke="#605e5c" stroke-width="0.950"/></svg>
<span class="t" style="left:1421.40px;top:810px;font-size:9.9px;line-height:11px;color:#3b3a39;transform:scaleX(0.8992);">Sales Order</span>
<svg class="b" style="left:1397px;top:828.2px;" width="6" height="10" viewBox="0 0 6 10"><path d="M0.700 0.600l4.300 4.400l-4.300 4.400" fill="none" stroke="#605e5c" stroke-width="0.900"/></svg>
<svg class="b" style="left:1406.1px;top:827.9000000000001px;" width="11" height="10" viewBox="0 0 11 10"><rect x="0.600" y="0.600" width="9.600" height="8.800" rx="0.500" fill="#fbfbfb" stroke="#605e5c" stroke-width="1.200"/><path d="M0.600 1.800h9.600" stroke="#605e5c" stroke-width="1.600"/><path d="M0.600 4.500h9.600M0.600 6.900h9.600M3.700 2v7.400M7.100 2v7.400" stroke="#605e5c" stroke-width="0.950"/></svg>
<span class="t" style="left:1421.40px;top:829px;font-size:9.9px;line-height:11px;color:#3b3a39;transform:scaleX(0.9193);">Sales Territory</span>
<div class="b" style="left:1579.5px;top:401.35px;width:1.4px;height:1.4px;background:#605e5c;border-radius:50%;"></div>
<div class="b" style="left:1582.9px;top:401.35px;width:1.4px;height:1.4px;background:#605e5c;border-radius:50%;"></div>
<div class="b" style="left:1586.3px;top:401.35px;width:1.4px;height:1.4px;background:#605e5c;border-radius:50%;"></div>
<!-- p_bottom -->
<div class="b" style="left:0px;top:822px;width:1247px;height:27px;background:#f3f2f1;"></div>
<div class="b" style="left:32px;top:822px;width:1190px;height:0.8px;background:#e1dfdd;"></div>
<svg class="b" style="left:36px;top:832.5px;" width="4" height="7" viewBox="0 0 4 7"><path d="M4 0.500L0.500 3.500L4 6.500z" fill="#c8c6c4"/></svg>
<svg class="b" style="left:53px;top:832.5px;" width="4" height="7" viewBox="0 0 4 7"><path d="M0 0.500L3.500 3.500L0 6.500z" fill="#c8c6c4"/></svg>
<div class="b" style="left:146px;top:822px;width:1px;height:27.5px;background:#dad8d6;"></div>
<div class="b" style="left:206px;top:822px;width:1px;height:27.5px;background:#dad8d6;"></div>
<div class="b" style="left:266px;top:822px;width:1px;height:27.5px;background:#dad8d6;"></div>
<div class="b" style="left:62.3px;top:822px;width:1.3px;height:27.5px;background:#a19f9d;"></div>
<div class="b" style="left:31.5px;top:822px;width:1px;height:27.5px;background:#e1dfdd;"></div>
<div class="b" style="left:266.5px;top:822px;width:112.5px;height:25.5px;background:#fff;"></div>
<div class="b" style="left:266.5px;top:846.5px;width:112.5px;height:3px;background:#117865;"></div>
<span class="t" style="left:79.00px;top:831px;font-size:9.8px;line-height:11px;color:#3b3a39;letter-spacing:-0.018px;">Introduction</span>
<span class="t" style="left:162.00px;top:831px;font-size:9.8px;line-height:11px;color:#3b3a39;transform:scaleX(0.8692);">Page 1</span>
<span class="t" style="left:222.00px;top:831px;font-size:9.8px;line-height:11px;color:#3b3a39;transform:scaleX(0.8853);">Page 2</span>
<span class="t" style="left:282.00px;top:831px;font-size:9.8px;line-height:11px;color:#252423;transform:scaleX(0.9470);-webkit-text-stroke:0.2px #252423;">Duplicate of Page 1</span>
<div class="b" style="left:379.5px;top:824px;width:30.5px;height:25px;background:#117865;"></div>
<div class="b" style="left:390.5px;top:835.2px;width:8px;height:2px;background:#fff;"></div>
<div class="b" style="left:393.5px;top:832.2px;width:2px;height:8px;background:#fff;"></div>
<div class="b" style="left:0px;top:849.5px;width:1600px;height:18.5px;background:#f3f2f1;border-top:1px solid #e4e2e0;"></div>
<span class="t" style="left:4.00px;top:854px;font-size:8.8px;line-height:10px;color:#4a4846;letter-spacing:0.090px;">Page 4 of 4</span>
<span class="t" style="left:1427.50px;top:854px;font-size:9.0px;line-height:10px;color:#4a4846;">-</span>
<div class="b" style="left:1434.5px;top:859px;width:77px;height:0.8px;background:#8a8886;"></div>
<div class="b" style="left:1474.3px;top:854.5px;width:2.6px;height:9.5px;background:#3b3a39;border-radius:1px;"></div>
<span class="t" style="left:1517.00px;top:854px;font-size:10.5px;line-height:12px;color:#4a4846;">+</span>
<span class="t" style="left:1534.00px;top:854px;font-size:8.8px;line-height:10px;color:#605e5c;letter-spacing:0.161px;">119%</span>
<svg class="b" style="left:1569.5px;top:853.5px;" width="12" height="10" viewBox="0 0 12 10"><rect x="0.600" y="0.600" width="10.800" height="8.800" rx="1" fill="none" stroke="#4a4846" stroke-width="1"/><path d="M1 3.500v-2.500h2.500M8.500 1h2.500v2.500M11 6.500v2.500h-2.500M3.500 9h-2.500v-2.500" fill="none" stroke="#4a4846" stroke-width="1.600"/></svg>
<!-- p_ribicons -->
<svg class="b" style="left:0;top:0" width="800" height="126" viewBox="0 0 800 126"><rect x="13.5" y="62" width="16.5" height="19" rx="1" fill="#f7f3ee" stroke="#f1cfa5" stroke-width="1.2"/>
<path d="M17.5 63.500v-2.300h2.500a1.800 1.800 0 0 1 3.600 0h2.500v2.300z" fill="#f3f2f1" stroke="#d6d4d2" stroke-width="0.900"/>
<rect x="24" y="69.500" width="10" height="13" fill="#f4f4f4" stroke="#d0cecc" stroke-width="1"/>
<path d="M44.500 58.800l4.600 9.200M49.500 58.800l-4.600 9.200" stroke="#3b3a39" stroke-width="1.100" fill="none"/>
<circle cx="44.600" cy="69.200" r="1.700" fill="#4a9bd4"/><circle cx="49.400" cy="69.200" r="1.700" fill="#4a9bd4"/>
<path d="M44.500 77h-4v9.500h3" fill="none" stroke="#3b3a39" stroke-width="1.100"/>
<path d="M44.500 77h5l3.300 3.300v8.500h-8.300z" fill="#fafafa" stroke="#3b3a39" stroke-width="1.100" stroke-linejoin="round"/><path d="M49.500 77v3.300h3.300" fill="none" stroke="#3b3a39" stroke-width="0.900"/><path d="M47 84.500h3.500M47 86.500h3.500" stroke="#8a8886" stroke-width="0.700"/>
<path d="M41.500 102.500l6-3.800l3 4.300l-3.500 4.300z" fill="#fbe3c8" stroke="#e07b1e" stroke-width="1.100" stroke-linejoin="round"/>
<path d="M47.500 98.700l2.800-1.500l2.300-1.500l1.200 1.600l-1.800 2.200l-1.500 3.500z" fill="#fafafa" stroke="#3b3a39" stroke-width="1" stroke-linejoin="round"/>
<path d="M138.8 62.4v16.4a8.4 2.8 0 0 0 16.8 0v-16.4" fill="#fafafa" stroke="#605e5c" stroke-width="1.1"/><ellipse cx="147.20000000000002" cy="62.4" rx="8.4" ry="2.8" fill="#fafafa" stroke="#605e5c" stroke-width="1.1"/>
<rect x="147.8" y="70.6" width="12" height="12" fill="#fafafa" stroke="#605e5c" stroke-width="1.1"/><rect x="147.8" y="70.6" width="12" height="2.4" fill="#605e5c"/><path d="M147.8 76.20h12M147.8 79.40h12M151.80 73.0v9.6M155.80 73.0v9.6" stroke="#605e5c" stroke-width="0.8" fill="none"/>
<path d="M177.5 59.8h11.5l5.5 5.5v16.0h-17z" fill="#fafafa" stroke="#605e5c" stroke-width="1.1" stroke-linejoin="round"/><path d="M189.0 59.8v5.5h5.5" fill="none" stroke="#605e5c" stroke-width="1"/>
<rect x="187" y="72" width="11" height="11" rx="0.800" fill="#107c41"/>
<path d="M190.200 74.800l4.600 5.600M194.800 74.800l-4.600 5.600" stroke="#fff" stroke-width="1.300"/>
<rect x="212" y="59.800" width="22" height="21.800" fill="#fafafa" stroke="#605e5c" stroke-width="1.200"/><path d="M212 62.300h22" stroke="#605e5c" stroke-width="1.400"/>
<path d="M225.3 71.30000000000001v9.5a5.15 1.9 0 0 0 10.3 0v-9.5" fill="#f0f7fd" stroke="#4a9ede" stroke-width="1.1"/><ellipse cx="230.45000000000002" cy="71.30000000000001" rx="5.15" ry="1.9" fill="#f0f7fd" stroke="#4a9ede" stroke-width="1.1"/>
<path d="M245.8 59.8h11.0l5.5 5.5v16.0h-16.5z" fill="#fafafa" stroke="#605e5c" stroke-width="1.1" stroke-linejoin="round"/><path d="M256.8 59.8v5.5h5.5" fill="none" stroke="#605e5c" stroke-width="1"/>
<path d="M256.3 71.30000000000001v9.5a5.15 1.9 0 0 0 10.3 0v-9.5" fill="#fdf3ea" stroke="#e8873a" stroke-width="1.1"/><ellipse cx="261.45" cy="71.30000000000001" rx="5.15" ry="1.9" fill="#fdf3ea" stroke="#e8873a" stroke-width="1.1"/>
<rect x="274.7" y="60" width="21.8" height="21.5" fill="#fafafa" stroke="#605e5c" stroke-width="1.1"/><rect x="274.7" y="60" width="21.8" height="2.3" fill="#605e5c"/><path d="M274.7 68.70h21.8M274.7 75.10h21.8M281.97 62.3v19.2M289.23 62.3v19.2" stroke="#605e5c" stroke-width="0.8" fill="none"/>
<rect x="272" y="57" width="9.500" height="9.800" fill="#f3f2f1"/><path d="M273 63.600h11.500M278.700 58v11.500" stroke="#4ea771" stroke-width="1.500"/>
<path d="M315.50 78.60C314.73 78.32 313.77 77.52 313.20 76.50C312.63 75.48 312.03 74.20 312.10 72.50C312.17 70.80 312.68 67.90 313.60 66.30C314.52 64.70 316.32 63.63 317.60 62.90C318.88 62.17 320.02 61.85 321.30 61.90C322.58 61.95 324.38 62.78 325.30 63.20C326.22 63.62 326.32 64.43 326.80 64.40C327.28 64.37 327.67 63.35 328.20 63.00C328.73 62.65 329.20 62.05 330.00 62.30C330.80 62.55 332.28 63.30 333.00 64.50C333.72 65.70 334.33 67.83 334.30 69.50C334.27 71.17 333.68 73.08 332.80 74.50C331.92 75.92 330.33 77.23 329.00 78.00C327.67 78.77 326.13 79.13 324.80 79.10C323.47 79.07 321.90 78.22 321.00 77.80C320.10 77.38 319.93 76.53 319.40 76.60C318.87 76.67 318.45 77.87 317.80 78.20C317.15 78.53 316.27 78.88 315.50 78.60z" fill="#fcfcfc" stroke="#605e5c" stroke-width="1"/>
<path d="M319.30 76.40C318.97 75.92 317.65 74.57 317.30 73.50C316.95 72.43 316.95 71.03 317.20 70.00C317.45 68.97 318.08 67.95 318.80 67.30C319.52 66.65 320.55 66.22 321.50 66.10C322.45 65.98 323.67 66.20 324.50 66.60C325.33 67.00 326.07 67.72 326.50 68.50C326.93 69.28 327.15 70.45 327.10 71.30C327.05 72.15 326.35 73.22 326.20 73.60" fill="none" stroke="#605e5c" stroke-width="0.900"/>
<path d="M326.90 64.80C327.23 65.28 328.55 66.63 328.90 67.70C329.25 68.77 329.25 70.17 329.00 71.20C328.75 72.23 328.12 73.25 327.40 73.90C326.68 74.55 325.65 74.98 324.70 75.10C323.75 75.22 322.53 75.00 321.70 74.60C320.87 74.20 320.13 73.48 319.70 72.70C319.27 71.92 319.05 70.75 319.10 69.90C319.15 69.05 319.85 67.98 320.00 67.60" fill="none" stroke="#605e5c" stroke-width="0.900"/>
<circle cx="323.100" cy="70.600" r="2.700" fill="#fcfcfc" stroke="#605e5c" stroke-width="0.900"/>
<path d="M358.3 59.8h11.2l5.5 5.5v16.0h-16.7z" fill="#fafafa" stroke="#605e5c" stroke-width="1.1" stroke-linejoin="round"/><path d="M369.5 59.8v5.5h5.5" fill="none" stroke="#605e5c" stroke-width="1"/>
<circle cx="373.500" cy="77" r="5.300" fill="#fff" stroke="#3a96dd" stroke-width="1.100"/><path d="M373.500 74v3.300h2.600" fill="none" stroke="#3b3a39" stroke-width="0.900"/>
<rect x="413.5" y="60" width="21.7" height="21.5" fill="#fafafa" stroke="#605e5c" stroke-width="1.1"/><rect x="413.5" y="60" width="21.7" height="2.3" fill="#605e5c"/><path d="M413.5 68.70h21.7M413.5 75.10h21.7M420.73 62.3v19.2M427.97 62.3v19.2" stroke="#605e5c" stroke-width="0.8" fill="none"/>
<path d="M434.55 65.70 L422.44 78.13 L421.30 82.60 L425.74 81.34 L437.85 68.90z" fill="#fff" stroke="#2b88d8" stroke-width="1.1" stroke-linejoin="round"/><path d="M432.46 67.84L435.75 71.05" stroke="#2b88d8" stroke-width="1"/><path d="M421.30 82.60L421.84 80.33L423.56 82.00z" fill="#2b88d8"/>
<path d="M454.7 59.8h10.5l5.5 5.5v16.0h-16z" fill="#fafafa" stroke="#605e5c" stroke-width="1.1" stroke-linejoin="round"/><path d="M465.2 59.8v5.5h5.5" fill="none" stroke="#605e5c" stroke-width="1"/>
<circle cx="469.700" cy="77" r="6.500" fill="#f3f2f1"/>
<path d="M464.800 75.500a5 5 0 0 1 9-1.800M474.600 78.500a5 5 0 0 1-9 1.800" fill="none" stroke="#2e9e5b" stroke-width="1.200"/><path d="M474.500 71.200v2.900h-2.900M464.900 82.800v-2.900h2.900" fill="none" stroke="#2e9e5b" stroke-width="1.200"/>
<rect x="512" y="63.300" width="5.800" height="18" fill="#d2d0ce" stroke="#b3b0ad" stroke-width="0.800"/>
<rect x="498.500" y="68.600" width="6.500" height="12.800" fill="#8fc1ee" stroke="#2b88d8" stroke-width="1.100"/>
<rect x="505" y="59.900" width="6.800" height="21.500" fill="#fafafa" stroke="#605e5c" stroke-width="1.100"/>
<rect x="510.500" y="72.500" width="10" height="10.500" fill="#f3f2f1" opacity="0.850"/><path d="M509.500 77.300h11.500M515.200 71.500v11.500" stroke="#4ea771" stroke-width="1.300"/>
<rect x="528.700" y="61.900" width="22.800" height="17.600" fill="#fafafa" stroke="#605e5c" stroke-width="1.200"/>
<path d="M535.800 75.700l4.200-10.300l4.200 10.300M537.300 72.300h5.400" fill="none" stroke="#2b88d8" stroke-width="1.200"/>
<circle cx="528.7" cy="61.9" r="1.400" fill="#2b88d8"/>
<circle cx="551.5" cy="61.9" r="1.400" fill="#2b88d8"/>
<circle cx="528.7" cy="79.5" r="1.400" fill="#2b88d8"/>
<circle cx="551.5" cy="79.5" r="1.400" fill="#2b88d8"/>
<rect x="565.500" y="69" width="6.300" height="12.500" fill="#fafafa" stroke="#605e5c" stroke-width="1.100"/><rect x="571.800" y="59.900" width="6.500" height="21.600" fill="#fafafa" stroke="#605e5c" stroke-width="1.100"/><rect x="578.300" y="63.500" width="6.300" height="18" fill="#fafafa" stroke="#605e5c" stroke-width="1.100"/>
<path d="M585.65 65.70 L573.63 78.13 L572.50 82.60 L576.93 81.32 L588.95 68.90z" fill="#fff" stroke="#2b88d8" stroke-width="1.1" stroke-linejoin="round"/><path d="M583.56 67.86L586.87 71.06" stroke="#2b88d8" stroke-width="1"/><path d="M572.50 82.60L573.03 80.33L574.75 82.00z" fill="#2b88d8"/>
<rect x="619.5" y="59.9" width="15" height="21.6" rx="1" fill="#fafafa" stroke="#605e5c" stroke-width="1.2"/><rect x="622.2" y="62.5" width="9.6" height="3.2" fill="#9cc6ee" stroke="#2b88d8" stroke-width="0.7"/><circle cx="623.40" cy="69.50" r="1.15" fill="#252423"/><circle cx="627.00" cy="69.50" r="1.15" fill="#252423"/><circle cx="630.60" cy="69.50" r="1.15" fill="#252423"/><circle cx="623.40" cy="74.10" r="1.15" fill="#252423"/><circle cx="627.00" cy="74.10" r="1.15" fill="#252423"/><circle cx="630.60" cy="74.10" r="1.15" fill="#252423"/><circle cx="623.40" cy="78.70" r="1.15" fill="#252423"/><circle cx="627.00" cy="78.70" r="1.15" fill="#252423"/><circle cx="630.60" cy="78.70" r="1.15" fill="#252423"/>
<rect x="657.4" y="59.9" width="15.3" height="21.6" rx="1" fill="#fafafa" stroke="#605e5c" stroke-width="1.2"/><rect x="660.1" y="62.5" width="9.9" height="3.2" fill="#d2d0ce" stroke="#a19f9d" stroke-width="0.7"/><circle cx="661.30" cy="69.50" r="1.15" fill="#252423"/><circle cx="665.05" cy="69.50" r="1.15" fill="#252423"/><circle cx="668.80" cy="69.50" r="1.15" fill="#252423"/><circle cx="661.30" cy="74.10" r="1.15" fill="#252423"/><circle cx="665.05" cy="74.10" r="1.15" fill="#252423"/><circle cx="668.80" cy="74.10" r="1.15" fill="#252423"/><circle cx="661.30" cy="78.70" r="1.15" fill="#252423"/><circle cx="665.05" cy="78.70" r="1.15" fill="#252423"/><circle cx="668.80" cy="78.70" r="1.15" fill="#252423"/>
<path d="M657.500 58.300h5.300l-2.200 5.200h2.600l-8.200 10l2.300-7h-3.300z" fill="#fbd37a" stroke="#e8871e" stroke-width="0.900" stroke-linejoin="round"/>
<path d="M720.300 59.800h-7.800a1 1 0 0 0-1 1v19.700a1 1 0 0 0 1 1h14a1 1 0 0 0 1-1v-9.300" fill="#f8f8f8" stroke="#b7d4ea" stroke-width="1.300"/>
<g transform="rotate(45 719.700 71.300)"><rect x="713.700" y="69" width="12" height="4.600" rx="0.800" fill="none" stroke="#b7d4ea" stroke-width="0.900"/><rect x="715.200" y="70.300" width="9" height="2" fill="none" stroke="#b7d4ea" stroke-width="0.800"/></g>
<g transform="rotate(45 726.400 64.700)"><rect x="724.200" y="58" width="5.400" height="4.800" fill="#fbfbfb" stroke="#b7d4ea" stroke-width="0.900"/><rect x="719.800" y="62.700" width="13.200" height="4" rx="0.600" fill="#fbfbfb" stroke="#b7d4ea" stroke-width="0.900"/><path d="M720 67h12.800" stroke="#9dcae8" stroke-width="1.500"/></g>
<path d="M772.500 81.500v-19a2.500 2.500 0 0 1 2.500-2.500h2.500a2.500 2.500 0 0 1 2.500 2.500v7" fill="#fafafa" stroke="#605e5c" stroke-width="1.200"/>
<path d="M768 81.500v-11a2.500 2.500 0 0 1 2.500-2.500h2.500a2.500 2.500 0 0 1 2.500 2.500v11" fill="#fafafa" stroke="#605e5c" stroke-width="1.200"/>
<rect x="763.500" y="73.500" width="7.500" height="8" rx="1.800" fill="#fafafa" stroke="#605e5c" stroke-width="1.200"/><path d="M771 81.500h6" stroke="#605e5c" stroke-width="1.200"/>
<path d="M779.300 83v-11.300M775 75.800l4.300-4.300l4.300 4.300" fill="none" stroke="#2b7fc3" stroke-width="1.200"/></svg>
<!-- p_vizicons -->
<svg class="b" style="left:1256.0px;top:215.0px;" width="14.6" height="14.3" viewBox="0 0 15 15"><path d="M0.600 0.500v13.500h14" fill="none" stroke="#4a4846" stroke-width="1.100"/><rect x="1" y="2" width="3.5" height="3.3" fill="#fbfbfb" stroke="#4a4846" stroke-width="0.8"/><rect x="4.5" y="2" width="5.5" height="3.3" fill="#86bdf0" stroke="#2b88d8" stroke-width="0.8"/><rect x="1" y="8" width="5" height="3.3" fill="#fbfbfb" stroke="#4a4846" stroke-width="0.8"/><rect x="6" y="8" width="7" height="3.3" fill="#c8c6c4" stroke="#a19f9d" stroke-width="0.8"/></svg>
<svg class="b" style="left:1278.05px;top:215.0px;" width="14.6" height="14.3" viewBox="0 0 15 15"><path d="M0.600 0.500v13.500h14" fill="none" stroke="#4a4846" stroke-width="1.100"/><rect x="3" y="9" width="3" height="5" fill="#fbfbfb" stroke="#4a4846" stroke-width="0.8"/><rect x="3" y="4" width="3" height="5" fill="#86bdf0" stroke="#2b88d8" stroke-width="0.8"/><rect x="9.5" y="6" width="3" height="8" fill="#fbfbfb" stroke="#4a4846" stroke-width="0.8"/><rect x="9.5" y="1.5" width="3" height="4.5" fill="#c8c6c4" stroke="#a19f9d" stroke-width="0.8"/></svg>
<svg class="b" style="left:1300.1px;top:215.0px;" width="14.6" height="14.3" viewBox="0 0 15 15"><path d="M0.600 0.500v13.500h14" fill="none" stroke="#4a4846" stroke-width="1.100"/><rect x="1" y="0.8" width="13" height="2.6" fill="#86bdf0" stroke="#2b88d8" stroke-width="0.8"/><rect x="1" y="4" width="8" height="2.6" fill="#fbfbfb" stroke="#4a4846" stroke-width="0.8"/><rect x="1" y="7.2" width="6" height="2.6" fill="#c8c6c4" stroke="#a19f9d" stroke-width="0.8"/><rect x="1" y="10.4" width="10" height="2.6" fill="#fbfbfb" stroke="#4a4846" stroke-width="0.8"/></svg>
<svg class="b" style="left:1322.15px;top:215.0px;" width="14.6" height="14.3" viewBox="0 0 15 15"><path d="M0.600 0.500v13.500h14" fill="none" stroke="#4a4846" stroke-width="1.100"/><rect x="1.2" y="1" width="3.3" height="13" fill="#86bdf0" stroke="#2b88d8" stroke-width="0.8"/><rect x="4.8" y="6" width="2.8" height="8" fill="#fbfbfb" stroke="#4a4846" stroke-width="0.8"/><rect x="7.8" y="8" width="2.8" height="6" fill="#c8c6c4" stroke="#a19f9d" stroke-width="0.8"/><rect x="10.8" y="4" width="2.8" height="10" fill="#fbfbfb" stroke="#4a4846" stroke-width="0.8"/></svg>
<svg class="b" style="left:1344.2px;top:215.0px;" width="14.6" height="14.3" viewBox="0 0 15 15"><path d="M0.600 0.500v13.500h14" fill="none" stroke="#4a4846" stroke-width="1.100"/><rect x="1" y="2" width="3" height="3.3" fill="#fbfbfb" stroke="#4a4846" stroke-width="0.8"/><rect x="4" y="2" width="9.5" height="3.3" fill="#86bdf0" stroke="#2b88d8" stroke-width="0.8"/><rect x="1" y="8" width="8" height="3.3" fill="#fbfbfb" stroke="#4a4846" stroke-width="0.8"/><rect x="9" y="8" width="4.5" height="3.3" fill="#c8c6c4" stroke="#a19f9d" stroke-width="0.8"/></svg>
<svg class="b" style="left:1366.25px;top:215.0px;" width="14.6" height="14.3" viewBox="0 0 15 15"><path d="M0.600 0.500v13.500h14" fill="none" stroke="#4a4846" stroke-width="1.100"/><rect x="3" y="10.5" width="3" height="3.5" fill="#fbfbfb" stroke="#4a4846" stroke-width="0.8"/><rect x="3" y="1.5" width="3" height="9" fill="#86bdf0" stroke="#2b88d8" stroke-width="0.8"/><rect x="9.5" y="6" width="3" height="8" fill="#fbfbfb" stroke="#4a4846" stroke-width="0.8"/><rect x="9.5" y="1.5" width="3" height="4.5" fill="#c8c6c4" stroke="#a19f9d" stroke-width="0.8"/></svg>
<svg class="b" style="left:1256.0px;top:236.83px;" width="14.6" height="14.3" viewBox="0 0 15 15"><path d="M0.600 0.500v13.500h14" fill="none" stroke="#4a4846" stroke-width="1.100"/><path d="M1 11.500l8.500-8.800l4.500 4.500" fill="none" stroke="#2b88d8" stroke-width="1"/><path d="M1 8.500l4-4.200l3.500 3.200l4.800-4.500" fill="none" stroke="#4a4846" stroke-width="1"/></svg>
<svg class="b" style="left:1278.05px;top:236.83px;" width="14.6" height="14.3" viewBox="0 0 15 15"><path d="M8 14l3.500-12.500l3 6v6.500z" fill="#c8c6c4" stroke="#a19f9d" stroke-width="0.700"/><path d="M0.600 14v-5.500l5-7.500l4.500 6.500" fill="#fbfbfb" stroke="#4a4846" stroke-width="0.900"/><path d="M0.600 14v-4l2 1.800l5.400-7.300l6.500 9.500z" fill="#86bdf0" stroke="#2b88d8" stroke-width="0.900"/></svg>
<svg class="b" style="left:1300.1px;top:236.83px;" width="14.6" height="14.3" viewBox="0 0 15 15"><path d="M0.600 0.500v13.500h14" fill="none" stroke="#4a4846" stroke-width="1.100"/><path d="M0.600 3l4.500 4.500l4.500-5l5 3.500v4l-5-3l-4.500 5l-4.500-4.500z" fill="#86bdf0" stroke="#2b88d8" stroke-width="0.900"/></svg>
<svg class="b" style="left:1322.15px;top:236.83px;" width="14.6" height="14.3" viewBox="0 0 15 15"><path d="M0.600 0.500v13.500h14" fill="none" stroke="#4a4846" stroke-width="1.100"/><rect x="3" y="6" width="3" height="8" fill="#fbfbfb" stroke="#4a4846" stroke-width="0.8"/><rect x="3" y="1.5" width="3" height="5" fill="#86bdf0" stroke="#2b88d8" stroke-width="0.8"/><rect x="9.5" y="6" width="3" height="8" fill="#fbfbfb" stroke="#4a4846" stroke-width="0.8"/><rect x="9.5" y="1.5" width="3" height="4.5" fill="#c8c6c4" stroke="#a19f9d" stroke-width="0.8"/><path d="M1 12l3.500-4.500l3.500 3.500l5.500-6" fill="none" stroke="#4a4846" stroke-width="1"/></svg>
<svg class="b" style="left:1344.2px;top:236.83px;" width="14.6" height="14.3" viewBox="0 0 15 15"><path d="M0.600 0.500v13.500h14" fill="none" stroke="#4a4846" stroke-width="1.100"/><rect x="2.5" y="6" width="3" height="8" fill="#86bdf0" stroke="#2b88d8" stroke-width="0.8"/><rect x="6.5" y="1.5" width="3" height="12.5" fill="#fbfbfb" stroke="#4a4846" stroke-width="0.8"/><rect x="10.5" y="7" width="2.5" height="7" fill="#c8c6c4" stroke="#a19f9d" stroke-width="0.8"/><path d="M1 12l3.500-5.500l3.500 4.500l5.500-6.500" fill="none" stroke="#4a4846" stroke-width="1"/></svg>
<svg class="b" style="left:1366.25px;top:236.83px;" width="14.6" height="14.3" viewBox="0 0 15 15"><path d="M0.600 0.500v13.500h14" fill="none" stroke="#4a4846" stroke-width="1.100"/><path d="M1 2.500c3 0 4 3 6.500 3s3.500-3 6.500-3v3c-3 0-4 3-6.500 3s-3.500-3-6.500-3z" fill="#c8c6c4" stroke="#8a8886" stroke-width="0.700"/><path d="M1 12c3 0 4-5 6.500-5s3.500 5 6.500 5v-2.500c-3 0-4-4.500-6.500-4.500s-3.500 4.500-6.500 4.500z" fill="#2b88d8" transform="translate(0 -1)"/><circle cx="3.200" cy="11" r="1.600" fill="#f2a33a"/><circle cx="7.500" cy="8.300" r="1.300" fill="#f2a33a"/><circle cx="12.500" cy="10.500" r="1.600" fill="#f2a33a"/></svg>
<svg class="b" style="left:1256.0px;top:258.66px;" width="14.6" height="14.3" viewBox="0 0 15 15"><path d="M0.600 0.500v13.500h14" fill="none" stroke="#4a4846" stroke-width="1.100"/><rect x="1.5" y="3" width="2.5" height="11" fill="#fbfbfb" stroke="#4a4846" stroke-width="0.8"/><rect x="4.5" y="8" width="2.5" height="6" fill="#c8c6c4" stroke="#8a8886" stroke-width="0.8"/><rect x="7.5" y="1.5" width="2.5" height="6.5" fill="#86bdf0" stroke="#2b88d8" stroke-width="0.8"/><rect x="10.5" y="1.5" width="3" height="12.5" fill="#c8c6c4" stroke="#8a8886" stroke-width="0.8"/><rect x="7.5" y="8" width="2.5" height="6" fill="#fbfbfb" stroke="#4a4846" stroke-width="0.8"/></svg>
<svg class="b" style="left:1278.05px;top:258.66px;" width="14.6" height="14.3" viewBox="0 0 15 15"><rect x="0.5" y="1" width="14" height="3" fill="#86bdf0" stroke="#2b88d8" stroke-width="0.8"/><rect x="2" y="4.5" width="11" height="3" fill="#86bdf0" stroke="#2b88d8" stroke-width="0.8"/><rect x="3.8" y="8" width="7.4" height="2.8" fill="#86bdf0" stroke="#2b88d8" stroke-width="0.8"/><rect x="5.5" y="11.3" width="4" height="2.7" fill="#86bdf0" stroke="#2b88d8" stroke-width="0.8"/></svg>
<svg class="b" style="left:1300.1px;top:258.66px;" width="14.6" height="14.3" viewBox="0 0 15 15"><path d="M0.600 0.500v13.500h14" fill="none" stroke="#4a4846" stroke-width="1.100"/><circle cx="12" cy="2" r="1.300" fill="#252423"/><circle cx="4.200" cy="10.800" r="1.300" fill="#252423"/><circle cx="4" cy="4.300" r="1.100" fill="#86bdf0"/><circle cx="7.800" cy="7" r="1.200" fill="#86bdf0"/><circle cx="12" cy="10" r="1.200" fill="#86bdf0"/></svg>
<svg class="b" style="left:1322.15px;top:258.66px;" width="14.6" height="14.3" viewBox="0 0 15 15"><circle cx="7.500" cy="7.500" r="6.800" fill="#fbfbfb" stroke="#4a4846" stroke-width="1"/><path d="M7.500 0.700a6.800 6.800 0 0 1 5 11.400l-5-4.600z" fill="#86bdf0" stroke="#2b88d8" stroke-width="0.900"/></svg>
<svg class="b" style="left:1344.2px;top:258.66px;" width="14.6" height="14.3" viewBox="0 0 15 15"><circle cx="7.500" cy="7.500" r="5.100" fill="none" stroke="#86bdf0" stroke-width="3.400"/><circle cx="7.500" cy="7.500" r="6.800" fill="none" stroke="#2b88d8" stroke-width="0.900"/><circle cx="7.500" cy="7.500" r="3.300" fill="#fbfbfb" stroke="#2b88d8" stroke-width="0.900"/><path d="M0.700 7.500h3.500" stroke="#fbfbfb" stroke-width="1.100"/></svg>
<svg class="b" style="left:1366.25px;top:258.66px;" width="14.6" height="14.3" viewBox="0 0 15 15"><rect x="0.7" y="0.7" width="6.8" height="6.8" fill="#86bdf0" stroke="#2b88d8" stroke-width="1"/><rect x="0.7" y="7.5" width="6.8" height="6.8" fill="#86bdf0" stroke="#2b88d8" stroke-width="1"/><rect x="7.5" y="0.7" width="6.8" height="4.5" fill="#fbfbfb" stroke="#4a4846" stroke-width="1"/><rect x="7.5" y="5.2" width="3.4" height="9.1" fill="#fbfbfb" stroke="#4a4846" stroke-width="1"/><rect x="10.9" y="5.2" width="3.4" height="4.5" fill="#fbfbfb" stroke="#4a4846" stroke-width="1"/><rect x="10.9" y="9.7" width="3.4" height="4.6" fill="#fbfbfb" stroke="#4a4846" stroke-width="1"/></svg>
<svg class="b" style="left:1256.0px;top:280.49px;" width="14.6" height="14.3" viewBox="0 0 15 15"><circle cx="7" cy="6.500" r="5.600" fill="#e8e8e8" stroke="#4a4846" stroke-width="1.300"/><path d="M4 4.500l3-2l3.500 1l1 3l-2 3.500l-3-0.500l0.500-2.500l-2.500-0.500z" fill="#2e9e5b"/><path d="M4.500 12.500c1.500 1 4 1 5.500 0M7 12.800v1.200M3.500 14.300h7.500" stroke="#4a4846" stroke-width="1" fill="none"/></svg>
<svg class="b" style="left:1278.05px;top:280.49px;" width="14.6" height="14.3" viewBox="0 0 15 15"><path d="M0.800 1.500l4 1.500l5-1.500l4.500-0.500v7l-4 3.500l-3 3l-4-2l-2.500-5z" fill="#c8c6c4" stroke="#4a4846" stroke-width="0.900"/><path d="M0.800 1.500l4 1.500l1.500 4.500l-4.500 0.500z" fill="#86bdf0" stroke="#2b88d8" stroke-width="0.700"/><path d="M8.500 7.500l5.800-0.500v1l-4 3.500l-2.500 2.500l-1-2.500z" fill="#86bdf0" stroke="#2b88d8" stroke-width="0.700"/></svg>
<svg class="b" style="left:1300.1px;top:280.49px;" width="14.6" height="14.3" viewBox="0 0 15 15"><path d="M1 11.500a6.500 6.500 0 0 1 6.500-7v2.700a3.800 3.800 0 0 0-3.800 4.300z" fill="#fbfbfb" stroke="#4a4846" stroke-width="0.900"/><path d="M7.500 4.500a6.500 6.500 0 0 1 6.500 7h-2.700a3.800 3.800 0 0 0-3.800-4.300z" fill="#86bdf0" stroke="#2b88d8" stroke-width="0.900"/><path d="M7 11.500l3.500-3.500" stroke="#4a4846" stroke-width="1.300"/></svg>
<svg class="b" style="left:1322.15px;top:280.49px;" width="14.6" height="14.3" viewBox="0 0 15 15"><rect x="0.7" y="2" width="13.6" height="11" fill="#fbfbfb" stroke="#4a4846" stroke-width="1.1"/><text x="7.500" y="10.200" font-family="Liberation Sans,sans-serif" font-size="6.800" fill="#2b88d8" text-anchor="middle" letter-spacing="-0.300">123</text></svg>
<svg class="b" style="left:1344.2px;top:280.49px;" width="14.6" height="14.3" viewBox="0 0 15 15"><rect x="0.7" y="0.7" width="13.6" height="13.6" fill="#fbfbfb" stroke="#4a4846" stroke-width="1.1"/><path d="M3 4h9M3 7.500h6M3 11h9" stroke="#2b88d8" stroke-width="1.300"/></svg>
<svg class="b" style="left:1366.25px;top:280.49px;" width="14.6" height="14.3" viewBox="0 0 15 15"><rect x="0.7" y="1.5" width="13.6" height="11.5" fill="#fbfbfb" stroke="#4a4846" stroke-width="1.1"/><path d="M2.500 8.500l2.500-4.500l2.500 4.500z" fill="#3aa655"/><path d="M8 4.500h5l-2.500 4.500z" fill="#e8474c"/></svg>
<svg class="b" style="left:1256.0px;top:302.32px;" width="14.6" height="14.3" viewBox="0 0 15 15"><rect x="0.7" y="1.2" width="13.3" height="11.5" fill="#fbfbfb" stroke="#4a4846" stroke-width="1.1"/><path d="M0.700 3.500h13.300" stroke="#4a4846" stroke-width="1"/><rect x="2.800" y="5.500" width="2.300" height="2.300" fill="#c8c6c4" stroke="#8a8886" stroke-width="0.600"/><rect x="2.800" y="9" width="2.300" height="2.300" fill="#c8c6c4" stroke="#8a8886" stroke-width="0.600"/><path d="M7 8h8l-3 3.500v3.500l-2-1v-2.500z" fill="#fbfbfb" stroke="#4a4846" stroke-width="1"/></svg>
<svg class="b" style="left:1278.05px;top:302.32px;" width="14.6" height="14.3" viewBox="0 0 15 15"><rect x="0.7" y="1" width="13.6" height="13" fill="#fbfbfb" stroke="#4a4846" stroke-width="1.2"/><path d="M0.700 3.300h13.600" stroke="#4a4846" stroke-width="1.600"/><path d="M0.700 7h13.600M0.700 10.500h13.600M5.200 3.300v10.700M9.800 3.300v10.700" stroke="#4a4846" stroke-width="0.900"/></svg>
<svg class="b" style="left:1300.1px;top:302.32px;" width="14.6" height="14.3" viewBox="0 0 15 15"><rect x="0.7" y="1" width="13.6" height="13" fill="#fbfbfb" stroke="#4a4846" stroke-width="1.2"/><rect x="9.8" y="3.5" width="4.5" height="10.5" fill="#86bdf0"/><rect x="0.7" y="10.5" width="13.6" height="3.5" fill="#86bdf0"/><path d="M0.700 3.300h13.600" stroke="#4a4846" stroke-width="1.600"/><path d="M0.700 7h13.600M0.700 10.500h13.600M5.200 3.300v10.700M9.800 3.300v10.700" stroke="#4a4846" stroke-width="0.900"/><rect x="0.7" y="1" width="13.6" height="13" fill="none" stroke="#4a4846" stroke-width="1.2"/></svg>
<svg class="b" style="left:1322.15px;top:302.32px;" width="14.6" height="14.3" viewBox="0 0 15 15"><text x="7.800" y="13" font-family="Liberation Sans,sans-serif" font-size="13" font-weight="bold" fill="#2b88d8" text-anchor="middle">R</text></svg>
<svg class="b" style="left:1344.2px;top:302.32px;" width="14.6" height="14.3" viewBox="0 0 15 15"><text x="7.500" y="11" font-family="Liberation Sans,sans-serif" font-size="13" font-weight="bold" fill="#2b88d8" text-anchor="middle" letter-spacing="-0.500">Py</text></svg>
<svg class="b" style="left:1366.25px;top:302.32px;" width="14.6" height="14.3" viewBox="0 0 15 15"><path d="M1 0.500v13.500h13.500" fill="none" stroke="#4a4846" stroke-width="1.100"/><path d="M1 3.500h9M1 7h7M1 10.500h5" stroke="#2b88d8" stroke-width="0.900"/><circle cx="12" cy="3.500" r="1.800" fill="#fbfbfb" stroke="#2b88d8" stroke-width="0.900"/><circle cx="9" cy="7" r="0.900" fill="#4a4846"/><circle cx="6.500" cy="10.500" r="0.900" fill="#4a4846"/></svg>
<svg class="b" style="left:1256.0px;top:324.15px;" width="14.6" height="14.3" viewBox="0 0 15 15"><rect x="0.5" y="5.8" width="5.5" height="3.4" fill="#86bdf0" stroke="#2b88d8" stroke-width="0.8"/><rect x="9.5" y="0.7" width="5" height="3.4" fill="#86bdf0" stroke="#2b88d8" stroke-width="0.8"/><rect x="9.5" y="5.8" width="5" height="3.4" fill="#86bdf0" stroke="#2b88d8" stroke-width="0.8"/><rect x="9.5" y="10.9" width="5" height="3.4" fill="#86bdf0" stroke="#2b88d8" stroke-width="0.8"/><path d="M6 7.500h3.500M7.800 2.400v10.200M7.800 2.400h1.700M7.800 12.600h1.700" stroke="#4a4846" stroke-width="0.900" fill="none"/></svg>
<svg class="b" style="left:1278.05px;top:324.15px;" width="14.6" height="14.3" viewBox="0 0 15 15"><path d="M0.700 1.500h13.600v9h-8l-3.300 3v-3h-2.300z" fill="#fbfbfb" stroke="#2b88d8" stroke-width="1.200" stroke-linejoin="round"/></svg>
<svg class="b" style="left:1300.1px;top:324.15px;" width="14.6" height="14.3" viewBox="0 0 15 15"><path d="M2 0.700h7.500l3.500 3.500v10h-11z" fill="#fbfbfb" stroke="#4a4846" stroke-width="1.100" stroke-linejoin="round"/><path d="M9.500 0.700v3.500h3.500" fill="none" stroke="#4a4846" stroke-width="0.900"/><circle cx="2.500" cy="6.500" r="1.500" fill="#fbfbfb" stroke="#2b88d8" stroke-width="0.900"/><path d="M5.500 7.500h5M5 10h4" stroke="#86bdf0" stroke-width="1.100"/></svg>
<svg class="b" style="left:1322.15px;top:324.15px;" width="14.6" height="14.3" viewBox="0 0 15 15"><path d="M3.500 1h8v4.500a4 4 0 0 1-8 0z" fill="#fbfbfb" stroke="#4a4846" stroke-width="1.100"/><path d="M3.500 1.200h8" stroke="#2b88d8" stroke-width="1.800"/><path d="M3.500 2.500h-2.500c0 3 1 4.500 3 4.500M11.500 2.500h2.500c0 3-1 4.500-3 4.500" fill="none" stroke="#4a4846" stroke-width="1"/><path d="M7.500 9.500v2.500" stroke="#4a4846" stroke-width="1.300"/><path d="M4.500 13.500c0-2 6-2 6 0z" fill="#86bdf0" stroke="#2b88d8" stroke-width="1"/></svg>
<svg class="b" style="left:1344.2px;top:324.15px;" width="14.6" height="14.3" viewBox="0 0 15 15"><path d="M2 0.700h7.500l3.500 3.500v10.300h-11z" fill="#fbfbfb" stroke="#4a4846" stroke-width="1.200" stroke-linejoin="round"/><path d="M9.500 0.700v3.500h3.500" fill="none" stroke="#4a4846" stroke-width="0.900"/><path d="M4.800 12.500v-3M7.500 12.500v-2M10.200 12.500v-5" stroke="#252423" stroke-width="1.600"/></svg>
<svg class="b" style="left:1366.25px;top:324.15px;" width="14.6" height="14.3" viewBox="0 0 15 15"><path d="M2 3v10.500h12v-12.500h-8" fill="none" stroke="#2b88d8" stroke-width="1.400"/><path d="M5 11l3-2.500l1-3.500l2.500-1.500" fill="none" stroke="#86bdf0" stroke-width="1.600"/><path d="M2.500 0.500a2 2 0 0 1 2 2.200c0 1.500-2 3.800-2 3.800s-2-2.300-2-3.800a2 2 0 0 1 2-2.200z" fill="#e8771e"/><circle cx="13.500" cy="8.800" r="1.300" fill="#e8771e"/><circle cx="12.500" cy="12.500" r="2" fill="#e8771e"/></svg>
<svg class="b" style="left:1256.0px;top:345.98px;" width="14.6" height="14.3" viewBox="0 0 15 15"><path d="M7.500 0.800l6.700 6.700l-6.700 6.700l-6.700-6.700z" fill="none" stroke="#a83eb8" stroke-width="1.100" stroke-linejoin="round"/><path d="M4 4.300l7 6.900M11 4.300l-7 6.900" stroke="#a83eb8" stroke-width="1"/></svg>
<svg class="b" style="left:1278.05px;top:345.98px;" width="14.6" height="14.3" viewBox="0 0 15 15"><path d="M0.700 1h8l5.500 6.500l-5.500 6.500h-8l5.500-6.500z" fill="#fbfbfb" stroke="#2b88d8" stroke-width="1.100" stroke-linejoin="round"/><path d="M3.500 13l6-7M6.500 13.500l5.500-6.500" stroke="#2b88d8" stroke-width="0.900"/></svg>
<div class="b" style="left:1301.6px;top:352.28px;width:1.5px;height:1.5px;background:#4a4846;border-radius:50%;"></div>
<div class="b" style="left:1305.9px;top:352.28px;width:1.5px;height:1.5px;background:#4a4846;border-radius:50%;"></div>
<div class="b" style="left:1310.2px;top:352.28px;width:1.5px;height:1.5px;background:#4a4846;border-radius:50%;"></div>
<svg class="b" style="left:1256.5px;top:172.5px;" width="20" height="21" viewBox="0 0 20 21"><path d="M0.500 0.800h14.500" stroke="#3b3a39" stroke-width="1"/><rect x="0.500" y="5" width="19" height="6.300" fill="#117865" stroke="#252423" stroke-width="0.900" stroke-dasharray="1.200 1"/><rect x="0.500" y="13.500" width="19" height="6.300" fill="#117865" stroke="#252423" stroke-width="0.900" stroke-dasharray="1.200 1"/></svg>
<svg class="b" style="left:1310px;top:173px;" width="18" height="20" viewBox="0 0 18 20"><path d="M1.500 15v-8h4v-6h5v5M1.500 15h3" fill="none" stroke="#3b3a39" stroke-width="1.100"/><path d="M10.500 6h3.500l-2 3" fill="none" stroke="#3b3a39" stroke-width="1"/><path d="M16.500 5.500c0.800 1 0.500 2.500-0.500 4l-4.500 6.500l-3-1.800l4.500-6.500c1-1.500 2.500-2.400 3.500-2.200z" fill="#f3f2f1" stroke="#3b3a39" stroke-width="1.100" stroke-linejoin="round"/><path d="M8.500 14.200c-1 1-1 3-4.500 3.800c3 1.200 6.500 0.500 7.500-2z" fill="#f3f2f1" stroke="#3b3a39" stroke-width="1.100" stroke-linejoin="round"/></svg>
<svg class="b" style="left:1360px;top:172.5px;" width="20" height="21" viewBox="0 0 20 21"><circle cx="8.300" cy="8.300" r="7.500" fill="none" stroke="#3b3a39" stroke-width="1.100"/><path d="M13.500 13.500l5.500 5.500" stroke="#252423" stroke-width="1.800"/><path d="M1.500 8.500l3-2.500l3 1.800l5.500-4.300" fill="none" stroke="#3b3a39" stroke-width="1"/><path d="M4 11v2.500M6.500 10.500v4.500M9 10.500v4.500M11.500 9v4.500" stroke="#3b3a39" stroke-width="1"/></svg>
</div></body></html>
